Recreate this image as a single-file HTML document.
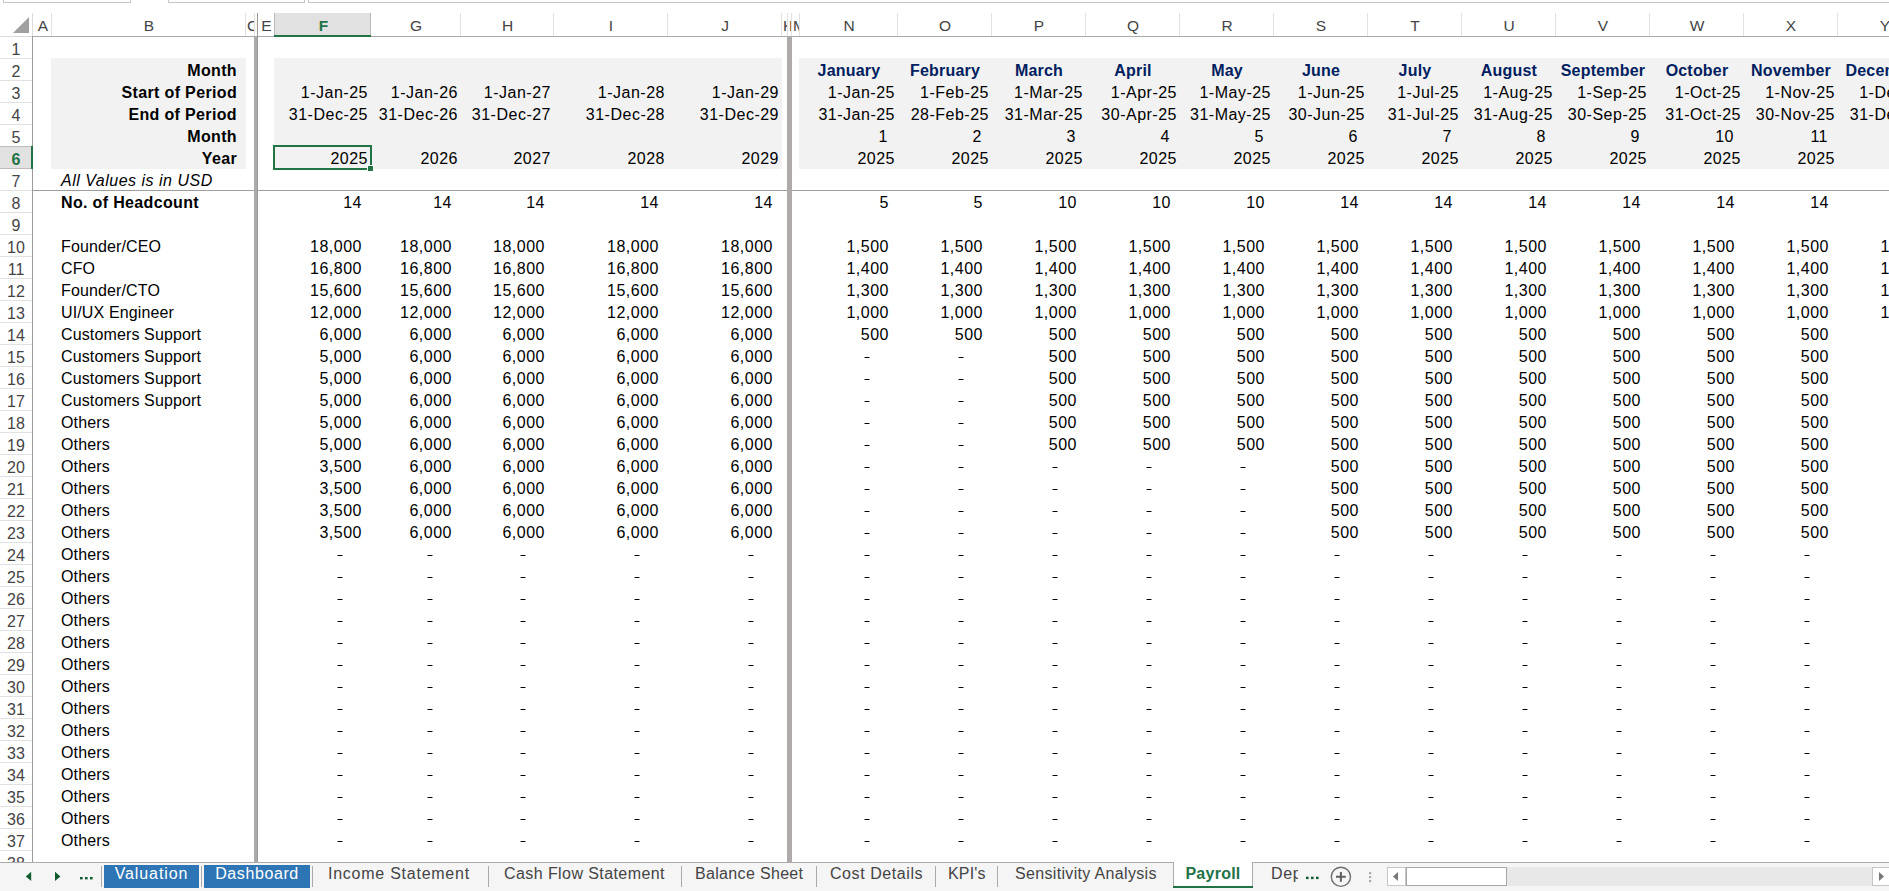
<!DOCTYPE html>
<html><head><meta charset="utf-8">
<style>
*{margin:0;padding:0;box-sizing:border-box}
html,body{width:1889px;height:891px;overflow:hidden;background:#fff}
#root{position:relative;width:1889px;height:891px;overflow:hidden;background:#fff;font-family:"Liberation Sans",sans-serif}
.abs{position:absolute}
.c{position:absolute;height:22px;line-height:22px;font-size:16px;color:#000;white-space:nowrap;letter-spacing:0.5px}
.b{font-weight:bold;letter-spacing:0.35px}
.i{font-style:italic}
.lab{letter-spacing:0.13px}
.navy{color:#002060;letter-spacing:0.2px}
.hl{position:absolute;top:13px;height:23px;line-height:26px;font-size:15.5px;color:#444;text-align:center;overflow:hidden;white-space:nowrap;padding-left:2px}
.hl.sel{background:#e1e1e1;color:#217346;font-weight:bold;border-left:1px solid #bababa;border-right:1px solid #bababa;height:22px}
.hs{position:absolute;top:13px;height:23px;width:1px;background:#e1e1e1}
.rn{position:absolute;left:0;width:32px;height:22px;line-height:26px;font-size:16px;color:#444;text-align:center}
.rn.sel{color:#217346;font-weight:bold}
.rs{position:absolute;left:0;width:32px;height:1px;background:#e1e1e1}
.band{position:absolute;background:#f2f2f2}
.tab{position:absolute;top:862px;height:23px;line-height:24px;font-size:16px;color:#444;white-space:nowrap;letter-spacing:0.6px;font-family:"Liberation Sans",sans-serif}
.tsep{position:absolute;top:866px;height:21px;width:1px;background:#ababab}
</style></head><body><div id="root">
<!-- top formula bar remnants -->
<div class="abs" style="left:3px;top:0;width:128px;height:3px;border:1px solid #c6c6c6;border-top:none"></div>
<div class="abs" style="left:168px;top:0;width:137px;height:3px;border:1px solid #c6c6c6;border-top:none"></div>
<div class="abs" style="left:308px;top:0;width:1600px;height:3px;border:1px solid #c6c6c6;border-top:none"></div>

<!-- column header -->
<div class="hl" style="left:33px;width:18px">A</div>
<div class="hl" style="left:51px;width:194px">B</div>
<div class="hl" style="left:245px;width:9px">C</div>
<div class="hl" style="left:257px;width:17px">E</div>
<div class="hl sel" style="left:274px;width:97px">F</div>
<div class="hl" style="left:370px;width:90px">G</div>
<div class="hl" style="left:460px;width:93px">H</div>
<div class="hl" style="left:553px;width:114px">I</div>
<div class="hl" style="left:667px;width:114px">J</div>
<div class="hl" style="left:781px;width:6px">K</div>
<div class="hl" style="left:787px;width:4px">L</div>
<div class="hl" style="left:791px;width:8px">M</div>
<div class="hl" style="left:799px;width:98px">N</div>
<div class="hl" style="left:897px;width:94px">O</div>
<div class="hl" style="left:991px;width:94px">P</div>
<div class="hl" style="left:1085px;width:94px">Q</div>
<div class="hl" style="left:1179px;width:94px">R</div>
<div class="hl" style="left:1273px;width:94px">S</div>
<div class="hl" style="left:1367px;width:94px">T</div>
<div class="hl" style="left:1461px;width:94px">U</div>
<div class="hl" style="left:1555px;width:94px">V</div>
<div class="hl" style="left:1649px;width:94px">W</div>
<div class="hl" style="left:1743px;width:94px">X</div>
<div class="hl" style="left:1837px;width:94px">Y</div>
<div class="hl" style="left:254px;width:3px">D</div>
<div class="hs" style="left:51px"></div>
<div class="hs" style="left:245px"></div>
<div class="hs" style="left:254px"></div>
<div class="hs" style="left:257px"></div>
<div class="hs" style="left:460px"></div>
<div class="hs" style="left:553px"></div>
<div class="hs" style="left:667px"></div>
<div class="hs" style="left:781px"></div>
<div class="hs" style="left:787px"></div>
<div class="hs" style="left:791px"></div>
<div class="hs" style="left:799px"></div>
<div class="hs" style="left:897px"></div>
<div class="hs" style="left:991px"></div>
<div class="hs" style="left:1085px"></div>
<div class="hs" style="left:1179px"></div>
<div class="hs" style="left:1273px"></div>
<div class="hs" style="left:1367px"></div>
<div class="hs" style="left:1461px"></div>
<div class="hs" style="left:1555px"></div>
<div class="hs" style="left:1649px"></div>
<div class="hs" style="left:1743px"></div>
<div class="hs" style="left:1837px"></div>
<div class="hs" style="left:1931px"></div>
<div class="abs" style="left:0;top:36px;width:33px;height:1px;background:#dadada"></div>
<div class="abs" style="left:33px;top:36px;width:1856px;height:1px;background:#ababab"></div>
<div class="abs" style="left:274px;top:35px;width:97px;height:2px;background:#217346"></div>
<!-- select-all triangle -->
<svg class="abs" style="left:13px;top:17px" width="17" height="17" viewBox="0 0 17 17"><path d="M16 0 L16 16 L0 16 Z" fill="#a0a0a0"/></svg>

<!-- row header -->
<div class="abs" style="left:0;top:146px;width:31px;height:23px;background:#e1e1e1;border-top:1px solid #bdbdbd;border-bottom:1px solid #bdbdbd"></div>
<div class="rn" style="top:37px">1</div>
<div class="rs" style="top:58px"></div>
<div class="rn" style="top:59px">2</div>
<div class="rs" style="top:80px"></div>
<div class="rn" style="top:81px">3</div>
<div class="rs" style="top:102px"></div>
<div class="rn" style="top:103px">4</div>
<div class="rs" style="top:124px"></div>
<div class="rn" style="top:125px">5</div>
<div class="rn sel" style="top:147px">6</div>
<div class="rn" style="top:169px">7</div>
<div class="rs" style="top:190px"></div>
<div class="rn" style="top:191px">8</div>
<div class="rs" style="top:212px"></div>
<div class="rn" style="top:213px">9</div>
<div class="rs" style="top:234px"></div>
<div class="rn" style="top:235px">10</div>
<div class="rs" style="top:256px"></div>
<div class="rn" style="top:257px">11</div>
<div class="rs" style="top:278px"></div>
<div class="rn" style="top:279px">12</div>
<div class="rs" style="top:300px"></div>
<div class="rn" style="top:301px">13</div>
<div class="rs" style="top:322px"></div>
<div class="rn" style="top:323px">14</div>
<div class="rs" style="top:344px"></div>
<div class="rn" style="top:345px">15</div>
<div class="rs" style="top:366px"></div>
<div class="rn" style="top:367px">16</div>
<div class="rs" style="top:388px"></div>
<div class="rn" style="top:389px">17</div>
<div class="rs" style="top:410px"></div>
<div class="rn" style="top:411px">18</div>
<div class="rs" style="top:432px"></div>
<div class="rn" style="top:433px">19</div>
<div class="rs" style="top:454px"></div>
<div class="rn" style="top:455px">20</div>
<div class="rs" style="top:476px"></div>
<div class="rn" style="top:477px">21</div>
<div class="rs" style="top:498px"></div>
<div class="rn" style="top:499px">22</div>
<div class="rs" style="top:520px"></div>
<div class="rn" style="top:521px">23</div>
<div class="rs" style="top:542px"></div>
<div class="rn" style="top:543px">24</div>
<div class="rs" style="top:564px"></div>
<div class="rn" style="top:565px">25</div>
<div class="rs" style="top:586px"></div>
<div class="rn" style="top:587px">26</div>
<div class="rs" style="top:608px"></div>
<div class="rn" style="top:609px">27</div>
<div class="rs" style="top:630px"></div>
<div class="rn" style="top:631px">28</div>
<div class="rs" style="top:652px"></div>
<div class="rn" style="top:653px">29</div>
<div class="rs" style="top:674px"></div>
<div class="rn" style="top:675px">30</div>
<div class="rs" style="top:696px"></div>
<div class="rn" style="top:697px">31</div>
<div class="rs" style="top:718px"></div>
<div class="rn" style="top:719px">32</div>
<div class="rs" style="top:740px"></div>
<div class="rn" style="top:741px">33</div>
<div class="rs" style="top:762px"></div>
<div class="rn" style="top:763px">34</div>
<div class="rs" style="top:784px"></div>
<div class="rn" style="top:785px">35</div>
<div class="rs" style="top:806px"></div>
<div class="rn" style="top:807px">36</div>
<div class="rs" style="top:828px"></div>
<div class="rn" style="top:829px">37</div>
<div class="rs" style="top:850px"></div>
<div class="rn" style="top:851px">38</div>
<div class="rs" style="top:872px"></div>
<div class="abs" style="left:32px;top:13px;width:1px;height:23px;background:#dadada"></div><div class="abs" style="left:32px;top:36px;width:1px;height:826px;background:#9b9b9b"></div>
<div class="abs" style="left:31px;top:146px;width:2px;height:23px;background:#217346"></div>

<!-- gray bands -->
<div class="band" style="left:51px;top:58px;width:195px;height:111px"></div>
<div class="band" style="left:274px;top:58px;width:508px;height:111px"></div>
<div class="band" style="left:799px;top:58px;width:1090px;height:111px"></div>

<!-- row 7 border -->
<div class="abs" style="left:33px;top:190px;width:1856px;height:1px;background:#9e9e9e"></div>

<!-- gray narrow columns -->
<div class="abs" style="left:254px;top:37px;width:3px;height:825px;background:#aeaaaa"></div>
<div class="abs" style="left:257px;top:13px;width:1px;height:849px;background:#999"></div>
<div class="abs" style="left:787px;top:37px;width:5px;height:825px;background:#aeaaaa"></div>

<!-- selection -->
<div class="abs" style="left:273px;top:145px;width:99px;height:25px;border:2px solid #217346"></div>
<div class="abs" style="left:367px;top:165px;width:7px;height:7px;background:#217346;border:1px solid #fff"></div>

<!-- cells -->
<div class="c b" style="left:51px;width:186px;text-align:right;top:60px;">Month</div>
<div class="c b" style="left:51px;width:186px;text-align:right;top:82px;">Start of Period</div>
<div class="c b" style="left:51px;width:186px;text-align:right;top:104px;">End of Period</div>
<div class="c b" style="left:51px;width:186px;text-align:right;top:126px;">Month</div>
<div class="c b" style="left:51px;width:186px;text-align:right;top:148px;">Year</div>
<div class="c i" style="left:61px;text-align:left;top:170px;">All Values is in USD</div>
<div class="c b" style="left:61px;text-align:left;top:192px;">No. of Headcount</div>
<div class="c lab" style="left:61px;text-align:left;top:236px;">Founder/CEO</div>
<div class="c lab" style="left:61px;text-align:left;top:258px;">CFO</div>
<div class="c lab" style="left:61px;text-align:left;top:280px;">Founder/CTO</div>
<div class="c lab" style="left:61px;text-align:left;top:302px;">UI/UX Engineer</div>
<div class="c lab" style="left:61px;text-align:left;top:324px;">Customers Support</div>
<div class="c lab" style="left:61px;text-align:left;top:346px;">Customers Support</div>
<div class="c lab" style="left:61px;text-align:left;top:368px;">Customers Support</div>
<div class="c lab" style="left:61px;text-align:left;top:390px;">Customers Support</div>
<div class="c lab" style="left:61px;text-align:left;top:412px;">Others</div>
<div class="c lab" style="left:61px;text-align:left;top:434px;">Others</div>
<div class="c lab" style="left:61px;text-align:left;top:456px;">Others</div>
<div class="c lab" style="left:61px;text-align:left;top:478px;">Others</div>
<div class="c lab" style="left:61px;text-align:left;top:500px;">Others</div>
<div class="c lab" style="left:61px;text-align:left;top:522px;">Others</div>
<div class="c lab" style="left:61px;text-align:left;top:544px;">Others</div>
<div class="c lab" style="left:61px;text-align:left;top:566px;">Others</div>
<div class="c lab" style="left:61px;text-align:left;top:588px;">Others</div>
<div class="c lab" style="left:61px;text-align:left;top:610px;">Others</div>
<div class="c lab" style="left:61px;text-align:left;top:632px;">Others</div>
<div class="c lab" style="left:61px;text-align:left;top:654px;">Others</div>
<div class="c lab" style="left:61px;text-align:left;top:676px;">Others</div>
<div class="c lab" style="left:61px;text-align:left;top:698px;">Others</div>
<div class="c lab" style="left:61px;text-align:left;top:720px;">Others</div>
<div class="c lab" style="left:61px;text-align:left;top:742px;">Others</div>
<div class="c lab" style="left:61px;text-align:left;top:764px;">Others</div>
<div class="c lab" style="left:61px;text-align:left;top:786px;">Others</div>
<div class="c lab" style="left:61px;text-align:left;top:808px;">Others</div>
<div class="c lab" style="left:61px;text-align:left;top:830px;">Others</div>
<div class="c " style="left:274px;width:94px;text-align:right;top:82px;">1-Jan-25</div>
<div class="c " style="left:274px;width:94px;text-align:right;top:104px;">31-Dec-25</div>
<div class="c " style="left:274px;width:94px;text-align:right;top:148px;">2025</div>
<div class="c " style="left:274px;width:88px;text-align:right;top:192px;">14</div>
<div class="c " style="left:370px;width:88px;text-align:right;top:82px;">1-Jan-26</div>
<div class="c " style="left:370px;width:88px;text-align:right;top:104px;">31-Dec-26</div>
<div class="c " style="left:370px;width:88px;text-align:right;top:148px;">2026</div>
<div class="c " style="left:370px;width:82px;text-align:right;top:192px;">14</div>
<div class="c " style="left:460px;width:91px;text-align:right;top:82px;">1-Jan-27</div>
<div class="c " style="left:460px;width:91px;text-align:right;top:104px;">31-Dec-27</div>
<div class="c " style="left:460px;width:91px;text-align:right;top:148px;">2027</div>
<div class="c " style="left:460px;width:85px;text-align:right;top:192px;">14</div>
<div class="c " style="left:553px;width:112px;text-align:right;top:82px;">1-Jan-28</div>
<div class="c " style="left:553px;width:112px;text-align:right;top:104px;">31-Dec-28</div>
<div class="c " style="left:553px;width:112px;text-align:right;top:148px;">2028</div>
<div class="c " style="left:553px;width:106px;text-align:right;top:192px;">14</div>
<div class="c " style="left:667px;width:112px;text-align:right;top:82px;">1-Jan-29</div>
<div class="c " style="left:667px;width:112px;text-align:right;top:104px;">31-Dec-29</div>
<div class="c " style="left:667px;width:112px;text-align:right;top:148px;">2029</div>
<div class="c " style="left:667px;width:106px;text-align:right;top:192px;">14</div>
<div class="c b navy" style="left:800px;width:98px;text-align:center;top:60px;">January</div>
<div class="c " style="left:799px;width:96px;text-align:right;top:82px;">1-Jan-25</div>
<div class="c " style="left:799px;width:96px;text-align:right;top:104px;">31-Jan-25</div>
<div class="c " style="left:799px;width:89px;text-align:right;top:126px;">1</div>
<div class="c " style="left:799px;width:96px;text-align:right;top:148px;">2025</div>
<div class="c b navy" style="left:898px;width:94px;text-align:center;top:60px;">February</div>
<div class="c " style="left:897px;width:92px;text-align:right;top:82px;">1-Feb-25</div>
<div class="c " style="left:897px;width:92px;text-align:right;top:104px;">28-Feb-25</div>
<div class="c " style="left:897px;width:85px;text-align:right;top:126px;">2</div>
<div class="c " style="left:897px;width:92px;text-align:right;top:148px;">2025</div>
<div class="c b navy" style="left:992px;width:94px;text-align:center;top:60px;">March</div>
<div class="c " style="left:991px;width:92px;text-align:right;top:82px;">1-Mar-25</div>
<div class="c " style="left:991px;width:92px;text-align:right;top:104px;">31-Mar-25</div>
<div class="c " style="left:991px;width:85px;text-align:right;top:126px;">3</div>
<div class="c " style="left:991px;width:92px;text-align:right;top:148px;">2025</div>
<div class="c b navy" style="left:1086px;width:94px;text-align:center;top:60px;">April</div>
<div class="c " style="left:1085px;width:92px;text-align:right;top:82px;">1-Apr-25</div>
<div class="c " style="left:1085px;width:92px;text-align:right;top:104px;">30-Apr-25</div>
<div class="c " style="left:1085px;width:85px;text-align:right;top:126px;">4</div>
<div class="c " style="left:1085px;width:92px;text-align:right;top:148px;">2025</div>
<div class="c b navy" style="left:1180px;width:94px;text-align:center;top:60px;">May</div>
<div class="c " style="left:1179px;width:92px;text-align:right;top:82px;">1-May-25</div>
<div class="c " style="left:1179px;width:92px;text-align:right;top:104px;">31-May-25</div>
<div class="c " style="left:1179px;width:85px;text-align:right;top:126px;">5</div>
<div class="c " style="left:1179px;width:92px;text-align:right;top:148px;">2025</div>
<div class="c b navy" style="left:1274px;width:94px;text-align:center;top:60px;">June</div>
<div class="c " style="left:1273px;width:92px;text-align:right;top:82px;">1-Jun-25</div>
<div class="c " style="left:1273px;width:92px;text-align:right;top:104px;">30-Jun-25</div>
<div class="c " style="left:1273px;width:85px;text-align:right;top:126px;">6</div>
<div class="c " style="left:1273px;width:92px;text-align:right;top:148px;">2025</div>
<div class="c b navy" style="left:1368px;width:94px;text-align:center;top:60px;">July</div>
<div class="c " style="left:1367px;width:92px;text-align:right;top:82px;">1-Jul-25</div>
<div class="c " style="left:1367px;width:92px;text-align:right;top:104px;">31-Jul-25</div>
<div class="c " style="left:1367px;width:85px;text-align:right;top:126px;">7</div>
<div class="c " style="left:1367px;width:92px;text-align:right;top:148px;">2025</div>
<div class="c b navy" style="left:1462px;width:94px;text-align:center;top:60px;">August</div>
<div class="c " style="left:1461px;width:92px;text-align:right;top:82px;">1-Aug-25</div>
<div class="c " style="left:1461px;width:92px;text-align:right;top:104px;">31-Aug-25</div>
<div class="c " style="left:1461px;width:85px;text-align:right;top:126px;">8</div>
<div class="c " style="left:1461px;width:92px;text-align:right;top:148px;">2025</div>
<div class="c b navy" style="left:1556px;width:94px;text-align:center;top:60px;">September</div>
<div class="c " style="left:1555px;width:92px;text-align:right;top:82px;">1-Sep-25</div>
<div class="c " style="left:1555px;width:92px;text-align:right;top:104px;">30-Sep-25</div>
<div class="c " style="left:1555px;width:85px;text-align:right;top:126px;">9</div>
<div class="c " style="left:1555px;width:92px;text-align:right;top:148px;">2025</div>
<div class="c b navy" style="left:1650px;width:94px;text-align:center;top:60px;">October</div>
<div class="c " style="left:1649px;width:92px;text-align:right;top:82px;">1-Oct-25</div>
<div class="c " style="left:1649px;width:92px;text-align:right;top:104px;">31-Oct-25</div>
<div class="c " style="left:1649px;width:85px;text-align:right;top:126px;">10</div>
<div class="c " style="left:1649px;width:92px;text-align:right;top:148px;">2025</div>
<div class="c b navy" style="left:1744px;width:94px;text-align:center;top:60px;">November</div>
<div class="c " style="left:1743px;width:92px;text-align:right;top:82px;">1-Nov-25</div>
<div class="c " style="left:1743px;width:92px;text-align:right;top:104px;">30-Nov-25</div>
<div class="c " style="left:1743px;width:85px;text-align:right;top:126px;">11</div>
<div class="c " style="left:1743px;width:92px;text-align:right;top:148px;">2025</div>
<div class="c b navy" style="left:1838px;width:94px;text-align:center;top:60px;">December</div>
<div class="c " style="left:1837px;width:92px;text-align:right;top:82px;">1-Dec-25</div>
<div class="c " style="left:1837px;width:92px;text-align:right;top:104px;">31-Dec-25</div>
<div class="c " style="left:1837px;width:85px;text-align:right;top:126px;">12</div>
<div class="c " style="left:1837px;width:92px;text-align:right;top:148px;">2025</div>
<div class="c " style="left:799px;width:90px;text-align:right;top:192px;">5</div>
<div class="c " style="left:897px;width:86px;text-align:right;top:192px;">5</div>
<div class="c " style="left:991px;width:86px;text-align:right;top:192px;">10</div>
<div class="c " style="left:1085px;width:86px;text-align:right;top:192px;">10</div>
<div class="c " style="left:1179px;width:86px;text-align:right;top:192px;">10</div>
<div class="c " style="left:1273px;width:86px;text-align:right;top:192px;">14</div>
<div class="c " style="left:1367px;width:86px;text-align:right;top:192px;">14</div>
<div class="c " style="left:1461px;width:86px;text-align:right;top:192px;">14</div>
<div class="c " style="left:1555px;width:86px;text-align:right;top:192px;">14</div>
<div class="c " style="left:1649px;width:86px;text-align:right;top:192px;">14</div>
<div class="c " style="left:1743px;width:86px;text-align:right;top:192px;">14</div>
<div class="c " style="left:1837px;width:86px;text-align:right;top:192px;">14</div>
<div class="c " style="left:274px;width:88px;text-align:right;top:236px;">18,000</div>
<div class="c " style="left:370px;width:82px;text-align:right;top:236px;">18,000</div>
<div class="c " style="left:460px;width:85px;text-align:right;top:236px;">18,000</div>
<div class="c " style="left:553px;width:106px;text-align:right;top:236px;">18,000</div>
<div class="c " style="left:667px;width:106px;text-align:right;top:236px;">18,000</div>
<div class="c " style="left:274px;width:88px;text-align:right;top:258px;">16,800</div>
<div class="c " style="left:370px;width:82px;text-align:right;top:258px;">16,800</div>
<div class="c " style="left:460px;width:85px;text-align:right;top:258px;">16,800</div>
<div class="c " style="left:553px;width:106px;text-align:right;top:258px;">16,800</div>
<div class="c " style="left:667px;width:106px;text-align:right;top:258px;">16,800</div>
<div class="c " style="left:274px;width:88px;text-align:right;top:280px;">15,600</div>
<div class="c " style="left:370px;width:82px;text-align:right;top:280px;">15,600</div>
<div class="c " style="left:460px;width:85px;text-align:right;top:280px;">15,600</div>
<div class="c " style="left:553px;width:106px;text-align:right;top:280px;">15,600</div>
<div class="c " style="left:667px;width:106px;text-align:right;top:280px;">15,600</div>
<div class="c " style="left:274px;width:88px;text-align:right;top:302px;">12,000</div>
<div class="c " style="left:370px;width:82px;text-align:right;top:302px;">12,000</div>
<div class="c " style="left:460px;width:85px;text-align:right;top:302px;">12,000</div>
<div class="c " style="left:553px;width:106px;text-align:right;top:302px;">12,000</div>
<div class="c " style="left:667px;width:106px;text-align:right;top:302px;">12,000</div>
<div class="c " style="left:274px;width:88px;text-align:right;top:324px;">6,000</div>
<div class="c " style="left:370px;width:82px;text-align:right;top:324px;">6,000</div>
<div class="c " style="left:460px;width:85px;text-align:right;top:324px;">6,000</div>
<div class="c " style="left:553px;width:106px;text-align:right;top:324px;">6,000</div>
<div class="c " style="left:667px;width:106px;text-align:right;top:324px;">6,000</div>
<div class="c " style="left:274px;width:88px;text-align:right;top:346px;">5,000</div>
<div class="c " style="left:370px;width:82px;text-align:right;top:346px;">6,000</div>
<div class="c " style="left:460px;width:85px;text-align:right;top:346px;">6,000</div>
<div class="c " style="left:553px;width:106px;text-align:right;top:346px;">6,000</div>
<div class="c " style="left:667px;width:106px;text-align:right;top:346px;">6,000</div>
<div class="c " style="left:274px;width:88px;text-align:right;top:368px;">5,000</div>
<div class="c " style="left:370px;width:82px;text-align:right;top:368px;">6,000</div>
<div class="c " style="left:460px;width:85px;text-align:right;top:368px;">6,000</div>
<div class="c " style="left:553px;width:106px;text-align:right;top:368px;">6,000</div>
<div class="c " style="left:667px;width:106px;text-align:right;top:368px;">6,000</div>
<div class="c " style="left:274px;width:88px;text-align:right;top:390px;">5,000</div>
<div class="c " style="left:370px;width:82px;text-align:right;top:390px;">6,000</div>
<div class="c " style="left:460px;width:85px;text-align:right;top:390px;">6,000</div>
<div class="c " style="left:553px;width:106px;text-align:right;top:390px;">6,000</div>
<div class="c " style="left:667px;width:106px;text-align:right;top:390px;">6,000</div>
<div class="c " style="left:274px;width:88px;text-align:right;top:412px;">5,000</div>
<div class="c " style="left:370px;width:82px;text-align:right;top:412px;">6,000</div>
<div class="c " style="left:460px;width:85px;text-align:right;top:412px;">6,000</div>
<div class="c " style="left:553px;width:106px;text-align:right;top:412px;">6,000</div>
<div class="c " style="left:667px;width:106px;text-align:right;top:412px;">6,000</div>
<div class="c " style="left:274px;width:88px;text-align:right;top:434px;">5,000</div>
<div class="c " style="left:370px;width:82px;text-align:right;top:434px;">6,000</div>
<div class="c " style="left:460px;width:85px;text-align:right;top:434px;">6,000</div>
<div class="c " style="left:553px;width:106px;text-align:right;top:434px;">6,000</div>
<div class="c " style="left:667px;width:106px;text-align:right;top:434px;">6,000</div>
<div class="c " style="left:274px;width:88px;text-align:right;top:456px;">3,500</div>
<div class="c " style="left:370px;width:82px;text-align:right;top:456px;">6,000</div>
<div class="c " style="left:460px;width:85px;text-align:right;top:456px;">6,000</div>
<div class="c " style="left:553px;width:106px;text-align:right;top:456px;">6,000</div>
<div class="c " style="left:667px;width:106px;text-align:right;top:456px;">6,000</div>
<div class="c " style="left:274px;width:88px;text-align:right;top:478px;">3,500</div>
<div class="c " style="left:370px;width:82px;text-align:right;top:478px;">6,000</div>
<div class="c " style="left:460px;width:85px;text-align:right;top:478px;">6,000</div>
<div class="c " style="left:553px;width:106px;text-align:right;top:478px;">6,000</div>
<div class="c " style="left:667px;width:106px;text-align:right;top:478px;">6,000</div>
<div class="c " style="left:274px;width:88px;text-align:right;top:500px;">3,500</div>
<div class="c " style="left:370px;width:82px;text-align:right;top:500px;">6,000</div>
<div class="c " style="left:460px;width:85px;text-align:right;top:500px;">6,000</div>
<div class="c " style="left:553px;width:106px;text-align:right;top:500px;">6,000</div>
<div class="c " style="left:667px;width:106px;text-align:right;top:500px;">6,000</div>
<div class="c " style="left:274px;width:88px;text-align:right;top:522px;">3,500</div>
<div class="c " style="left:370px;width:82px;text-align:right;top:522px;">6,000</div>
<div class="c " style="left:460px;width:85px;text-align:right;top:522px;">6,000</div>
<div class="c " style="left:553px;width:106px;text-align:right;top:522px;">6,000</div>
<div class="c " style="left:667px;width:106px;text-align:right;top:522px;">6,000</div>
<div class="abs" style="left:337px;top:555px;width:6px;height:1px;background:linear-gradient(to right,#8a8a8a 0 1px,#000 1px 5px,#8a8a8a 5px 6px)"></div>
<div class="abs" style="left:427px;top:555px;width:6px;height:1px;background:linear-gradient(to right,#8a8a8a 0 1px,#000 1px 5px,#8a8a8a 5px 6px)"></div>
<div class="abs" style="left:520px;top:555px;width:6px;height:1px;background:linear-gradient(to right,#8a8a8a 0 1px,#000 1px 5px,#8a8a8a 5px 6px)"></div>
<div class="abs" style="left:634px;top:555px;width:6px;height:1px;background:linear-gradient(to right,#8a8a8a 0 1px,#000 1px 5px,#8a8a8a 5px 6px)"></div>
<div class="abs" style="left:748px;top:555px;width:6px;height:1px;background:linear-gradient(to right,#8a8a8a 0 1px,#000 1px 5px,#8a8a8a 5px 6px)"></div>
<div class="abs" style="left:337px;top:577px;width:6px;height:1px;background:linear-gradient(to right,#8a8a8a 0 1px,#000 1px 5px,#8a8a8a 5px 6px)"></div>
<div class="abs" style="left:427px;top:577px;width:6px;height:1px;background:linear-gradient(to right,#8a8a8a 0 1px,#000 1px 5px,#8a8a8a 5px 6px)"></div>
<div class="abs" style="left:520px;top:577px;width:6px;height:1px;background:linear-gradient(to right,#8a8a8a 0 1px,#000 1px 5px,#8a8a8a 5px 6px)"></div>
<div class="abs" style="left:634px;top:577px;width:6px;height:1px;background:linear-gradient(to right,#8a8a8a 0 1px,#000 1px 5px,#8a8a8a 5px 6px)"></div>
<div class="abs" style="left:748px;top:577px;width:6px;height:1px;background:linear-gradient(to right,#8a8a8a 0 1px,#000 1px 5px,#8a8a8a 5px 6px)"></div>
<div class="abs" style="left:337px;top:599px;width:6px;height:1px;background:linear-gradient(to right,#8a8a8a 0 1px,#000 1px 5px,#8a8a8a 5px 6px)"></div>
<div class="abs" style="left:427px;top:599px;width:6px;height:1px;background:linear-gradient(to right,#8a8a8a 0 1px,#000 1px 5px,#8a8a8a 5px 6px)"></div>
<div class="abs" style="left:520px;top:599px;width:6px;height:1px;background:linear-gradient(to right,#8a8a8a 0 1px,#000 1px 5px,#8a8a8a 5px 6px)"></div>
<div class="abs" style="left:634px;top:599px;width:6px;height:1px;background:linear-gradient(to right,#8a8a8a 0 1px,#000 1px 5px,#8a8a8a 5px 6px)"></div>
<div class="abs" style="left:748px;top:599px;width:6px;height:1px;background:linear-gradient(to right,#8a8a8a 0 1px,#000 1px 5px,#8a8a8a 5px 6px)"></div>
<div class="abs" style="left:337px;top:621px;width:6px;height:1px;background:linear-gradient(to right,#8a8a8a 0 1px,#000 1px 5px,#8a8a8a 5px 6px)"></div>
<div class="abs" style="left:427px;top:621px;width:6px;height:1px;background:linear-gradient(to right,#8a8a8a 0 1px,#000 1px 5px,#8a8a8a 5px 6px)"></div>
<div class="abs" style="left:520px;top:621px;width:6px;height:1px;background:linear-gradient(to right,#8a8a8a 0 1px,#000 1px 5px,#8a8a8a 5px 6px)"></div>
<div class="abs" style="left:634px;top:621px;width:6px;height:1px;background:linear-gradient(to right,#8a8a8a 0 1px,#000 1px 5px,#8a8a8a 5px 6px)"></div>
<div class="abs" style="left:748px;top:621px;width:6px;height:1px;background:linear-gradient(to right,#8a8a8a 0 1px,#000 1px 5px,#8a8a8a 5px 6px)"></div>
<div class="abs" style="left:337px;top:643px;width:6px;height:1px;background:linear-gradient(to right,#8a8a8a 0 1px,#000 1px 5px,#8a8a8a 5px 6px)"></div>
<div class="abs" style="left:427px;top:643px;width:6px;height:1px;background:linear-gradient(to right,#8a8a8a 0 1px,#000 1px 5px,#8a8a8a 5px 6px)"></div>
<div class="abs" style="left:520px;top:643px;width:6px;height:1px;background:linear-gradient(to right,#8a8a8a 0 1px,#000 1px 5px,#8a8a8a 5px 6px)"></div>
<div class="abs" style="left:634px;top:643px;width:6px;height:1px;background:linear-gradient(to right,#8a8a8a 0 1px,#000 1px 5px,#8a8a8a 5px 6px)"></div>
<div class="abs" style="left:748px;top:643px;width:6px;height:1px;background:linear-gradient(to right,#8a8a8a 0 1px,#000 1px 5px,#8a8a8a 5px 6px)"></div>
<div class="abs" style="left:337px;top:665px;width:6px;height:1px;background:linear-gradient(to right,#8a8a8a 0 1px,#000 1px 5px,#8a8a8a 5px 6px)"></div>
<div class="abs" style="left:427px;top:665px;width:6px;height:1px;background:linear-gradient(to right,#8a8a8a 0 1px,#000 1px 5px,#8a8a8a 5px 6px)"></div>
<div class="abs" style="left:520px;top:665px;width:6px;height:1px;background:linear-gradient(to right,#8a8a8a 0 1px,#000 1px 5px,#8a8a8a 5px 6px)"></div>
<div class="abs" style="left:634px;top:665px;width:6px;height:1px;background:linear-gradient(to right,#8a8a8a 0 1px,#000 1px 5px,#8a8a8a 5px 6px)"></div>
<div class="abs" style="left:748px;top:665px;width:6px;height:1px;background:linear-gradient(to right,#8a8a8a 0 1px,#000 1px 5px,#8a8a8a 5px 6px)"></div>
<div class="abs" style="left:337px;top:687px;width:6px;height:1px;background:linear-gradient(to right,#8a8a8a 0 1px,#000 1px 5px,#8a8a8a 5px 6px)"></div>
<div class="abs" style="left:427px;top:687px;width:6px;height:1px;background:linear-gradient(to right,#8a8a8a 0 1px,#000 1px 5px,#8a8a8a 5px 6px)"></div>
<div class="abs" style="left:520px;top:687px;width:6px;height:1px;background:linear-gradient(to right,#8a8a8a 0 1px,#000 1px 5px,#8a8a8a 5px 6px)"></div>
<div class="abs" style="left:634px;top:687px;width:6px;height:1px;background:linear-gradient(to right,#8a8a8a 0 1px,#000 1px 5px,#8a8a8a 5px 6px)"></div>
<div class="abs" style="left:748px;top:687px;width:6px;height:1px;background:linear-gradient(to right,#8a8a8a 0 1px,#000 1px 5px,#8a8a8a 5px 6px)"></div>
<div class="abs" style="left:337px;top:709px;width:6px;height:1px;background:linear-gradient(to right,#8a8a8a 0 1px,#000 1px 5px,#8a8a8a 5px 6px)"></div>
<div class="abs" style="left:427px;top:709px;width:6px;height:1px;background:linear-gradient(to right,#8a8a8a 0 1px,#000 1px 5px,#8a8a8a 5px 6px)"></div>
<div class="abs" style="left:520px;top:709px;width:6px;height:1px;background:linear-gradient(to right,#8a8a8a 0 1px,#000 1px 5px,#8a8a8a 5px 6px)"></div>
<div class="abs" style="left:634px;top:709px;width:6px;height:1px;background:linear-gradient(to right,#8a8a8a 0 1px,#000 1px 5px,#8a8a8a 5px 6px)"></div>
<div class="abs" style="left:748px;top:709px;width:6px;height:1px;background:linear-gradient(to right,#8a8a8a 0 1px,#000 1px 5px,#8a8a8a 5px 6px)"></div>
<div class="abs" style="left:337px;top:731px;width:6px;height:1px;background:linear-gradient(to right,#8a8a8a 0 1px,#000 1px 5px,#8a8a8a 5px 6px)"></div>
<div class="abs" style="left:427px;top:731px;width:6px;height:1px;background:linear-gradient(to right,#8a8a8a 0 1px,#000 1px 5px,#8a8a8a 5px 6px)"></div>
<div class="abs" style="left:520px;top:731px;width:6px;height:1px;background:linear-gradient(to right,#8a8a8a 0 1px,#000 1px 5px,#8a8a8a 5px 6px)"></div>
<div class="abs" style="left:634px;top:731px;width:6px;height:1px;background:linear-gradient(to right,#8a8a8a 0 1px,#000 1px 5px,#8a8a8a 5px 6px)"></div>
<div class="abs" style="left:748px;top:731px;width:6px;height:1px;background:linear-gradient(to right,#8a8a8a 0 1px,#000 1px 5px,#8a8a8a 5px 6px)"></div>
<div class="abs" style="left:337px;top:753px;width:6px;height:1px;background:linear-gradient(to right,#8a8a8a 0 1px,#000 1px 5px,#8a8a8a 5px 6px)"></div>
<div class="abs" style="left:427px;top:753px;width:6px;height:1px;background:linear-gradient(to right,#8a8a8a 0 1px,#000 1px 5px,#8a8a8a 5px 6px)"></div>
<div class="abs" style="left:520px;top:753px;width:6px;height:1px;background:linear-gradient(to right,#8a8a8a 0 1px,#000 1px 5px,#8a8a8a 5px 6px)"></div>
<div class="abs" style="left:634px;top:753px;width:6px;height:1px;background:linear-gradient(to right,#8a8a8a 0 1px,#000 1px 5px,#8a8a8a 5px 6px)"></div>
<div class="abs" style="left:748px;top:753px;width:6px;height:1px;background:linear-gradient(to right,#8a8a8a 0 1px,#000 1px 5px,#8a8a8a 5px 6px)"></div>
<div class="abs" style="left:337px;top:775px;width:6px;height:1px;background:linear-gradient(to right,#8a8a8a 0 1px,#000 1px 5px,#8a8a8a 5px 6px)"></div>
<div class="abs" style="left:427px;top:775px;width:6px;height:1px;background:linear-gradient(to right,#8a8a8a 0 1px,#000 1px 5px,#8a8a8a 5px 6px)"></div>
<div class="abs" style="left:520px;top:775px;width:6px;height:1px;background:linear-gradient(to right,#8a8a8a 0 1px,#000 1px 5px,#8a8a8a 5px 6px)"></div>
<div class="abs" style="left:634px;top:775px;width:6px;height:1px;background:linear-gradient(to right,#8a8a8a 0 1px,#000 1px 5px,#8a8a8a 5px 6px)"></div>
<div class="abs" style="left:748px;top:775px;width:6px;height:1px;background:linear-gradient(to right,#8a8a8a 0 1px,#000 1px 5px,#8a8a8a 5px 6px)"></div>
<div class="abs" style="left:337px;top:797px;width:6px;height:1px;background:linear-gradient(to right,#8a8a8a 0 1px,#000 1px 5px,#8a8a8a 5px 6px)"></div>
<div class="abs" style="left:427px;top:797px;width:6px;height:1px;background:linear-gradient(to right,#8a8a8a 0 1px,#000 1px 5px,#8a8a8a 5px 6px)"></div>
<div class="abs" style="left:520px;top:797px;width:6px;height:1px;background:linear-gradient(to right,#8a8a8a 0 1px,#000 1px 5px,#8a8a8a 5px 6px)"></div>
<div class="abs" style="left:634px;top:797px;width:6px;height:1px;background:linear-gradient(to right,#8a8a8a 0 1px,#000 1px 5px,#8a8a8a 5px 6px)"></div>
<div class="abs" style="left:748px;top:797px;width:6px;height:1px;background:linear-gradient(to right,#8a8a8a 0 1px,#000 1px 5px,#8a8a8a 5px 6px)"></div>
<div class="abs" style="left:337px;top:819px;width:6px;height:1px;background:linear-gradient(to right,#8a8a8a 0 1px,#000 1px 5px,#8a8a8a 5px 6px)"></div>
<div class="abs" style="left:427px;top:819px;width:6px;height:1px;background:linear-gradient(to right,#8a8a8a 0 1px,#000 1px 5px,#8a8a8a 5px 6px)"></div>
<div class="abs" style="left:520px;top:819px;width:6px;height:1px;background:linear-gradient(to right,#8a8a8a 0 1px,#000 1px 5px,#8a8a8a 5px 6px)"></div>
<div class="abs" style="left:634px;top:819px;width:6px;height:1px;background:linear-gradient(to right,#8a8a8a 0 1px,#000 1px 5px,#8a8a8a 5px 6px)"></div>
<div class="abs" style="left:748px;top:819px;width:6px;height:1px;background:linear-gradient(to right,#8a8a8a 0 1px,#000 1px 5px,#8a8a8a 5px 6px)"></div>
<div class="abs" style="left:337px;top:841px;width:6px;height:1px;background:linear-gradient(to right,#8a8a8a 0 1px,#000 1px 5px,#8a8a8a 5px 6px)"></div>
<div class="abs" style="left:427px;top:841px;width:6px;height:1px;background:linear-gradient(to right,#8a8a8a 0 1px,#000 1px 5px,#8a8a8a 5px 6px)"></div>
<div class="abs" style="left:520px;top:841px;width:6px;height:1px;background:linear-gradient(to right,#8a8a8a 0 1px,#000 1px 5px,#8a8a8a 5px 6px)"></div>
<div class="abs" style="left:634px;top:841px;width:6px;height:1px;background:linear-gradient(to right,#8a8a8a 0 1px,#000 1px 5px,#8a8a8a 5px 6px)"></div>
<div class="abs" style="left:748px;top:841px;width:6px;height:1px;background:linear-gradient(to right,#8a8a8a 0 1px,#000 1px 5px,#8a8a8a 5px 6px)"></div>
<div class="c " style="left:799px;width:90px;text-align:right;top:236px;">1,500</div>
<div class="c " style="left:897px;width:86px;text-align:right;top:236px;">1,500</div>
<div class="c " style="left:991px;width:86px;text-align:right;top:236px;">1,500</div>
<div class="c " style="left:1085px;width:86px;text-align:right;top:236px;">1,500</div>
<div class="c " style="left:1179px;width:86px;text-align:right;top:236px;">1,500</div>
<div class="c " style="left:1273px;width:86px;text-align:right;top:236px;">1,500</div>
<div class="c " style="left:1367px;width:86px;text-align:right;top:236px;">1,500</div>
<div class="c " style="left:1461px;width:86px;text-align:right;top:236px;">1,500</div>
<div class="c " style="left:1555px;width:86px;text-align:right;top:236px;">1,500</div>
<div class="c " style="left:1649px;width:86px;text-align:right;top:236px;">1,500</div>
<div class="c " style="left:1743px;width:86px;text-align:right;top:236px;">1,500</div>
<div class="c " style="left:1837px;width:86px;text-align:right;top:236px;">1,500</div>
<div class="c " style="left:799px;width:90px;text-align:right;top:258px;">1,400</div>
<div class="c " style="left:897px;width:86px;text-align:right;top:258px;">1,400</div>
<div class="c " style="left:991px;width:86px;text-align:right;top:258px;">1,400</div>
<div class="c " style="left:1085px;width:86px;text-align:right;top:258px;">1,400</div>
<div class="c " style="left:1179px;width:86px;text-align:right;top:258px;">1,400</div>
<div class="c " style="left:1273px;width:86px;text-align:right;top:258px;">1,400</div>
<div class="c " style="left:1367px;width:86px;text-align:right;top:258px;">1,400</div>
<div class="c " style="left:1461px;width:86px;text-align:right;top:258px;">1,400</div>
<div class="c " style="left:1555px;width:86px;text-align:right;top:258px;">1,400</div>
<div class="c " style="left:1649px;width:86px;text-align:right;top:258px;">1,400</div>
<div class="c " style="left:1743px;width:86px;text-align:right;top:258px;">1,400</div>
<div class="c " style="left:1837px;width:86px;text-align:right;top:258px;">1,400</div>
<div class="c " style="left:799px;width:90px;text-align:right;top:280px;">1,300</div>
<div class="c " style="left:897px;width:86px;text-align:right;top:280px;">1,300</div>
<div class="c " style="left:991px;width:86px;text-align:right;top:280px;">1,300</div>
<div class="c " style="left:1085px;width:86px;text-align:right;top:280px;">1,300</div>
<div class="c " style="left:1179px;width:86px;text-align:right;top:280px;">1,300</div>
<div class="c " style="left:1273px;width:86px;text-align:right;top:280px;">1,300</div>
<div class="c " style="left:1367px;width:86px;text-align:right;top:280px;">1,300</div>
<div class="c " style="left:1461px;width:86px;text-align:right;top:280px;">1,300</div>
<div class="c " style="left:1555px;width:86px;text-align:right;top:280px;">1,300</div>
<div class="c " style="left:1649px;width:86px;text-align:right;top:280px;">1,300</div>
<div class="c " style="left:1743px;width:86px;text-align:right;top:280px;">1,300</div>
<div class="c " style="left:1837px;width:86px;text-align:right;top:280px;">1,300</div>
<div class="c " style="left:799px;width:90px;text-align:right;top:302px;">1,000</div>
<div class="c " style="left:897px;width:86px;text-align:right;top:302px;">1,000</div>
<div class="c " style="left:991px;width:86px;text-align:right;top:302px;">1,000</div>
<div class="c " style="left:1085px;width:86px;text-align:right;top:302px;">1,000</div>
<div class="c " style="left:1179px;width:86px;text-align:right;top:302px;">1,000</div>
<div class="c " style="left:1273px;width:86px;text-align:right;top:302px;">1,000</div>
<div class="c " style="left:1367px;width:86px;text-align:right;top:302px;">1,000</div>
<div class="c " style="left:1461px;width:86px;text-align:right;top:302px;">1,000</div>
<div class="c " style="left:1555px;width:86px;text-align:right;top:302px;">1,000</div>
<div class="c " style="left:1649px;width:86px;text-align:right;top:302px;">1,000</div>
<div class="c " style="left:1743px;width:86px;text-align:right;top:302px;">1,000</div>
<div class="c " style="left:1837px;width:86px;text-align:right;top:302px;">1,000</div>
<div class="c " style="left:799px;width:90px;text-align:right;top:324px;">500</div>
<div class="c " style="left:897px;width:86px;text-align:right;top:324px;">500</div>
<div class="c " style="left:991px;width:86px;text-align:right;top:324px;">500</div>
<div class="c " style="left:1085px;width:86px;text-align:right;top:324px;">500</div>
<div class="c " style="left:1179px;width:86px;text-align:right;top:324px;">500</div>
<div class="c " style="left:1273px;width:86px;text-align:right;top:324px;">500</div>
<div class="c " style="left:1367px;width:86px;text-align:right;top:324px;">500</div>
<div class="c " style="left:1461px;width:86px;text-align:right;top:324px;">500</div>
<div class="c " style="left:1555px;width:86px;text-align:right;top:324px;">500</div>
<div class="c " style="left:1649px;width:86px;text-align:right;top:324px;">500</div>
<div class="c " style="left:1743px;width:86px;text-align:right;top:324px;">500</div>
<div class="c " style="left:1837px;width:86px;text-align:right;top:324px;">500</div>
<div class="abs" style="left:864px;top:357px;width:6px;height:1px;background:linear-gradient(to right,#8a8a8a 0 1px,#000 1px 5px,#8a8a8a 5px 6px)"></div>
<div class="abs" style="left:958px;top:357px;width:6px;height:1px;background:linear-gradient(to right,#8a8a8a 0 1px,#000 1px 5px,#8a8a8a 5px 6px)"></div>
<div class="c " style="left:991px;width:86px;text-align:right;top:346px;">500</div>
<div class="c " style="left:1085px;width:86px;text-align:right;top:346px;">500</div>
<div class="c " style="left:1179px;width:86px;text-align:right;top:346px;">500</div>
<div class="c " style="left:1273px;width:86px;text-align:right;top:346px;">500</div>
<div class="c " style="left:1367px;width:86px;text-align:right;top:346px;">500</div>
<div class="c " style="left:1461px;width:86px;text-align:right;top:346px;">500</div>
<div class="c " style="left:1555px;width:86px;text-align:right;top:346px;">500</div>
<div class="c " style="left:1649px;width:86px;text-align:right;top:346px;">500</div>
<div class="c " style="left:1743px;width:86px;text-align:right;top:346px;">500</div>
<div class="c " style="left:1837px;width:86px;text-align:right;top:346px;">500</div>
<div class="abs" style="left:864px;top:379px;width:6px;height:1px;background:linear-gradient(to right,#8a8a8a 0 1px,#000 1px 5px,#8a8a8a 5px 6px)"></div>
<div class="abs" style="left:958px;top:379px;width:6px;height:1px;background:linear-gradient(to right,#8a8a8a 0 1px,#000 1px 5px,#8a8a8a 5px 6px)"></div>
<div class="c " style="left:991px;width:86px;text-align:right;top:368px;">500</div>
<div class="c " style="left:1085px;width:86px;text-align:right;top:368px;">500</div>
<div class="c " style="left:1179px;width:86px;text-align:right;top:368px;">500</div>
<div class="c " style="left:1273px;width:86px;text-align:right;top:368px;">500</div>
<div class="c " style="left:1367px;width:86px;text-align:right;top:368px;">500</div>
<div class="c " style="left:1461px;width:86px;text-align:right;top:368px;">500</div>
<div class="c " style="left:1555px;width:86px;text-align:right;top:368px;">500</div>
<div class="c " style="left:1649px;width:86px;text-align:right;top:368px;">500</div>
<div class="c " style="left:1743px;width:86px;text-align:right;top:368px;">500</div>
<div class="c " style="left:1837px;width:86px;text-align:right;top:368px;">500</div>
<div class="abs" style="left:864px;top:401px;width:6px;height:1px;background:linear-gradient(to right,#8a8a8a 0 1px,#000 1px 5px,#8a8a8a 5px 6px)"></div>
<div class="abs" style="left:958px;top:401px;width:6px;height:1px;background:linear-gradient(to right,#8a8a8a 0 1px,#000 1px 5px,#8a8a8a 5px 6px)"></div>
<div class="c " style="left:991px;width:86px;text-align:right;top:390px;">500</div>
<div class="c " style="left:1085px;width:86px;text-align:right;top:390px;">500</div>
<div class="c " style="left:1179px;width:86px;text-align:right;top:390px;">500</div>
<div class="c " style="left:1273px;width:86px;text-align:right;top:390px;">500</div>
<div class="c " style="left:1367px;width:86px;text-align:right;top:390px;">500</div>
<div class="c " style="left:1461px;width:86px;text-align:right;top:390px;">500</div>
<div class="c " style="left:1555px;width:86px;text-align:right;top:390px;">500</div>
<div class="c " style="left:1649px;width:86px;text-align:right;top:390px;">500</div>
<div class="c " style="left:1743px;width:86px;text-align:right;top:390px;">500</div>
<div class="c " style="left:1837px;width:86px;text-align:right;top:390px;">500</div>
<div class="abs" style="left:864px;top:423px;width:6px;height:1px;background:linear-gradient(to right,#8a8a8a 0 1px,#000 1px 5px,#8a8a8a 5px 6px)"></div>
<div class="abs" style="left:958px;top:423px;width:6px;height:1px;background:linear-gradient(to right,#8a8a8a 0 1px,#000 1px 5px,#8a8a8a 5px 6px)"></div>
<div class="c " style="left:991px;width:86px;text-align:right;top:412px;">500</div>
<div class="c " style="left:1085px;width:86px;text-align:right;top:412px;">500</div>
<div class="c " style="left:1179px;width:86px;text-align:right;top:412px;">500</div>
<div class="c " style="left:1273px;width:86px;text-align:right;top:412px;">500</div>
<div class="c " style="left:1367px;width:86px;text-align:right;top:412px;">500</div>
<div class="c " style="left:1461px;width:86px;text-align:right;top:412px;">500</div>
<div class="c " style="left:1555px;width:86px;text-align:right;top:412px;">500</div>
<div class="c " style="left:1649px;width:86px;text-align:right;top:412px;">500</div>
<div class="c " style="left:1743px;width:86px;text-align:right;top:412px;">500</div>
<div class="c " style="left:1837px;width:86px;text-align:right;top:412px;">500</div>
<div class="abs" style="left:864px;top:445px;width:6px;height:1px;background:linear-gradient(to right,#8a8a8a 0 1px,#000 1px 5px,#8a8a8a 5px 6px)"></div>
<div class="abs" style="left:958px;top:445px;width:6px;height:1px;background:linear-gradient(to right,#8a8a8a 0 1px,#000 1px 5px,#8a8a8a 5px 6px)"></div>
<div class="c " style="left:991px;width:86px;text-align:right;top:434px;">500</div>
<div class="c " style="left:1085px;width:86px;text-align:right;top:434px;">500</div>
<div class="c " style="left:1179px;width:86px;text-align:right;top:434px;">500</div>
<div class="c " style="left:1273px;width:86px;text-align:right;top:434px;">500</div>
<div class="c " style="left:1367px;width:86px;text-align:right;top:434px;">500</div>
<div class="c " style="left:1461px;width:86px;text-align:right;top:434px;">500</div>
<div class="c " style="left:1555px;width:86px;text-align:right;top:434px;">500</div>
<div class="c " style="left:1649px;width:86px;text-align:right;top:434px;">500</div>
<div class="c " style="left:1743px;width:86px;text-align:right;top:434px;">500</div>
<div class="c " style="left:1837px;width:86px;text-align:right;top:434px;">500</div>
<div class="abs" style="left:864px;top:467px;width:6px;height:1px;background:linear-gradient(to right,#8a8a8a 0 1px,#000 1px 5px,#8a8a8a 5px 6px)"></div>
<div class="abs" style="left:958px;top:467px;width:6px;height:1px;background:linear-gradient(to right,#8a8a8a 0 1px,#000 1px 5px,#8a8a8a 5px 6px)"></div>
<div class="abs" style="left:1052px;top:467px;width:6px;height:1px;background:linear-gradient(to right,#8a8a8a 0 1px,#000 1px 5px,#8a8a8a 5px 6px)"></div>
<div class="abs" style="left:1146px;top:467px;width:6px;height:1px;background:linear-gradient(to right,#8a8a8a 0 1px,#000 1px 5px,#8a8a8a 5px 6px)"></div>
<div class="abs" style="left:1240px;top:467px;width:6px;height:1px;background:linear-gradient(to right,#8a8a8a 0 1px,#000 1px 5px,#8a8a8a 5px 6px)"></div>
<div class="c " style="left:1273px;width:86px;text-align:right;top:456px;">500</div>
<div class="c " style="left:1367px;width:86px;text-align:right;top:456px;">500</div>
<div class="c " style="left:1461px;width:86px;text-align:right;top:456px;">500</div>
<div class="c " style="left:1555px;width:86px;text-align:right;top:456px;">500</div>
<div class="c " style="left:1649px;width:86px;text-align:right;top:456px;">500</div>
<div class="c " style="left:1743px;width:86px;text-align:right;top:456px;">500</div>
<div class="c " style="left:1837px;width:86px;text-align:right;top:456px;">500</div>
<div class="abs" style="left:864px;top:489px;width:6px;height:1px;background:linear-gradient(to right,#8a8a8a 0 1px,#000 1px 5px,#8a8a8a 5px 6px)"></div>
<div class="abs" style="left:958px;top:489px;width:6px;height:1px;background:linear-gradient(to right,#8a8a8a 0 1px,#000 1px 5px,#8a8a8a 5px 6px)"></div>
<div class="abs" style="left:1052px;top:489px;width:6px;height:1px;background:linear-gradient(to right,#8a8a8a 0 1px,#000 1px 5px,#8a8a8a 5px 6px)"></div>
<div class="abs" style="left:1146px;top:489px;width:6px;height:1px;background:linear-gradient(to right,#8a8a8a 0 1px,#000 1px 5px,#8a8a8a 5px 6px)"></div>
<div class="abs" style="left:1240px;top:489px;width:6px;height:1px;background:linear-gradient(to right,#8a8a8a 0 1px,#000 1px 5px,#8a8a8a 5px 6px)"></div>
<div class="c " style="left:1273px;width:86px;text-align:right;top:478px;">500</div>
<div class="c " style="left:1367px;width:86px;text-align:right;top:478px;">500</div>
<div class="c " style="left:1461px;width:86px;text-align:right;top:478px;">500</div>
<div class="c " style="left:1555px;width:86px;text-align:right;top:478px;">500</div>
<div class="c " style="left:1649px;width:86px;text-align:right;top:478px;">500</div>
<div class="c " style="left:1743px;width:86px;text-align:right;top:478px;">500</div>
<div class="c " style="left:1837px;width:86px;text-align:right;top:478px;">500</div>
<div class="abs" style="left:864px;top:511px;width:6px;height:1px;background:linear-gradient(to right,#8a8a8a 0 1px,#000 1px 5px,#8a8a8a 5px 6px)"></div>
<div class="abs" style="left:958px;top:511px;width:6px;height:1px;background:linear-gradient(to right,#8a8a8a 0 1px,#000 1px 5px,#8a8a8a 5px 6px)"></div>
<div class="abs" style="left:1052px;top:511px;width:6px;height:1px;background:linear-gradient(to right,#8a8a8a 0 1px,#000 1px 5px,#8a8a8a 5px 6px)"></div>
<div class="abs" style="left:1146px;top:511px;width:6px;height:1px;background:linear-gradient(to right,#8a8a8a 0 1px,#000 1px 5px,#8a8a8a 5px 6px)"></div>
<div class="abs" style="left:1240px;top:511px;width:6px;height:1px;background:linear-gradient(to right,#8a8a8a 0 1px,#000 1px 5px,#8a8a8a 5px 6px)"></div>
<div class="c " style="left:1273px;width:86px;text-align:right;top:500px;">500</div>
<div class="c " style="left:1367px;width:86px;text-align:right;top:500px;">500</div>
<div class="c " style="left:1461px;width:86px;text-align:right;top:500px;">500</div>
<div class="c " style="left:1555px;width:86px;text-align:right;top:500px;">500</div>
<div class="c " style="left:1649px;width:86px;text-align:right;top:500px;">500</div>
<div class="c " style="left:1743px;width:86px;text-align:right;top:500px;">500</div>
<div class="c " style="left:1837px;width:86px;text-align:right;top:500px;">500</div>
<div class="abs" style="left:864px;top:533px;width:6px;height:1px;background:linear-gradient(to right,#8a8a8a 0 1px,#000 1px 5px,#8a8a8a 5px 6px)"></div>
<div class="abs" style="left:958px;top:533px;width:6px;height:1px;background:linear-gradient(to right,#8a8a8a 0 1px,#000 1px 5px,#8a8a8a 5px 6px)"></div>
<div class="abs" style="left:1052px;top:533px;width:6px;height:1px;background:linear-gradient(to right,#8a8a8a 0 1px,#000 1px 5px,#8a8a8a 5px 6px)"></div>
<div class="abs" style="left:1146px;top:533px;width:6px;height:1px;background:linear-gradient(to right,#8a8a8a 0 1px,#000 1px 5px,#8a8a8a 5px 6px)"></div>
<div class="abs" style="left:1240px;top:533px;width:6px;height:1px;background:linear-gradient(to right,#8a8a8a 0 1px,#000 1px 5px,#8a8a8a 5px 6px)"></div>
<div class="c " style="left:1273px;width:86px;text-align:right;top:522px;">500</div>
<div class="c " style="left:1367px;width:86px;text-align:right;top:522px;">500</div>
<div class="c " style="left:1461px;width:86px;text-align:right;top:522px;">500</div>
<div class="c " style="left:1555px;width:86px;text-align:right;top:522px;">500</div>
<div class="c " style="left:1649px;width:86px;text-align:right;top:522px;">500</div>
<div class="c " style="left:1743px;width:86px;text-align:right;top:522px;">500</div>
<div class="c " style="left:1837px;width:86px;text-align:right;top:522px;">500</div>
<div class="abs" style="left:864px;top:555px;width:6px;height:1px;background:linear-gradient(to right,#8a8a8a 0 1px,#000 1px 5px,#8a8a8a 5px 6px)"></div>
<div class="abs" style="left:958px;top:555px;width:6px;height:1px;background:linear-gradient(to right,#8a8a8a 0 1px,#000 1px 5px,#8a8a8a 5px 6px)"></div>
<div class="abs" style="left:1052px;top:555px;width:6px;height:1px;background:linear-gradient(to right,#8a8a8a 0 1px,#000 1px 5px,#8a8a8a 5px 6px)"></div>
<div class="abs" style="left:1146px;top:555px;width:6px;height:1px;background:linear-gradient(to right,#8a8a8a 0 1px,#000 1px 5px,#8a8a8a 5px 6px)"></div>
<div class="abs" style="left:1240px;top:555px;width:6px;height:1px;background:linear-gradient(to right,#8a8a8a 0 1px,#000 1px 5px,#8a8a8a 5px 6px)"></div>
<div class="abs" style="left:1334px;top:555px;width:6px;height:1px;background:linear-gradient(to right,#8a8a8a 0 1px,#000 1px 5px,#8a8a8a 5px 6px)"></div>
<div class="abs" style="left:1428px;top:555px;width:6px;height:1px;background:linear-gradient(to right,#8a8a8a 0 1px,#000 1px 5px,#8a8a8a 5px 6px)"></div>
<div class="abs" style="left:1522px;top:555px;width:6px;height:1px;background:linear-gradient(to right,#8a8a8a 0 1px,#000 1px 5px,#8a8a8a 5px 6px)"></div>
<div class="abs" style="left:1616px;top:555px;width:6px;height:1px;background:linear-gradient(to right,#8a8a8a 0 1px,#000 1px 5px,#8a8a8a 5px 6px)"></div>
<div class="abs" style="left:1710px;top:555px;width:6px;height:1px;background:linear-gradient(to right,#8a8a8a 0 1px,#000 1px 5px,#8a8a8a 5px 6px)"></div>
<div class="abs" style="left:1804px;top:555px;width:6px;height:1px;background:linear-gradient(to right,#8a8a8a 0 1px,#000 1px 5px,#8a8a8a 5px 6px)"></div>
<div class="abs" style="left:1898px;top:555px;width:6px;height:1px;background:linear-gradient(to right,#8a8a8a 0 1px,#000 1px 5px,#8a8a8a 5px 6px)"></div>
<div class="abs" style="left:864px;top:577px;width:6px;height:1px;background:linear-gradient(to right,#8a8a8a 0 1px,#000 1px 5px,#8a8a8a 5px 6px)"></div>
<div class="abs" style="left:958px;top:577px;width:6px;height:1px;background:linear-gradient(to right,#8a8a8a 0 1px,#000 1px 5px,#8a8a8a 5px 6px)"></div>
<div class="abs" style="left:1052px;top:577px;width:6px;height:1px;background:linear-gradient(to right,#8a8a8a 0 1px,#000 1px 5px,#8a8a8a 5px 6px)"></div>
<div class="abs" style="left:1146px;top:577px;width:6px;height:1px;background:linear-gradient(to right,#8a8a8a 0 1px,#000 1px 5px,#8a8a8a 5px 6px)"></div>
<div class="abs" style="left:1240px;top:577px;width:6px;height:1px;background:linear-gradient(to right,#8a8a8a 0 1px,#000 1px 5px,#8a8a8a 5px 6px)"></div>
<div class="abs" style="left:1334px;top:577px;width:6px;height:1px;background:linear-gradient(to right,#8a8a8a 0 1px,#000 1px 5px,#8a8a8a 5px 6px)"></div>
<div class="abs" style="left:1428px;top:577px;width:6px;height:1px;background:linear-gradient(to right,#8a8a8a 0 1px,#000 1px 5px,#8a8a8a 5px 6px)"></div>
<div class="abs" style="left:1522px;top:577px;width:6px;height:1px;background:linear-gradient(to right,#8a8a8a 0 1px,#000 1px 5px,#8a8a8a 5px 6px)"></div>
<div class="abs" style="left:1616px;top:577px;width:6px;height:1px;background:linear-gradient(to right,#8a8a8a 0 1px,#000 1px 5px,#8a8a8a 5px 6px)"></div>
<div class="abs" style="left:1710px;top:577px;width:6px;height:1px;background:linear-gradient(to right,#8a8a8a 0 1px,#000 1px 5px,#8a8a8a 5px 6px)"></div>
<div class="abs" style="left:1804px;top:577px;width:6px;height:1px;background:linear-gradient(to right,#8a8a8a 0 1px,#000 1px 5px,#8a8a8a 5px 6px)"></div>
<div class="abs" style="left:1898px;top:577px;width:6px;height:1px;background:linear-gradient(to right,#8a8a8a 0 1px,#000 1px 5px,#8a8a8a 5px 6px)"></div>
<div class="abs" style="left:864px;top:599px;width:6px;height:1px;background:linear-gradient(to right,#8a8a8a 0 1px,#000 1px 5px,#8a8a8a 5px 6px)"></div>
<div class="abs" style="left:958px;top:599px;width:6px;height:1px;background:linear-gradient(to right,#8a8a8a 0 1px,#000 1px 5px,#8a8a8a 5px 6px)"></div>
<div class="abs" style="left:1052px;top:599px;width:6px;height:1px;background:linear-gradient(to right,#8a8a8a 0 1px,#000 1px 5px,#8a8a8a 5px 6px)"></div>
<div class="abs" style="left:1146px;top:599px;width:6px;height:1px;background:linear-gradient(to right,#8a8a8a 0 1px,#000 1px 5px,#8a8a8a 5px 6px)"></div>
<div class="abs" style="left:1240px;top:599px;width:6px;height:1px;background:linear-gradient(to right,#8a8a8a 0 1px,#000 1px 5px,#8a8a8a 5px 6px)"></div>
<div class="abs" style="left:1334px;top:599px;width:6px;height:1px;background:linear-gradient(to right,#8a8a8a 0 1px,#000 1px 5px,#8a8a8a 5px 6px)"></div>
<div class="abs" style="left:1428px;top:599px;width:6px;height:1px;background:linear-gradient(to right,#8a8a8a 0 1px,#000 1px 5px,#8a8a8a 5px 6px)"></div>
<div class="abs" style="left:1522px;top:599px;width:6px;height:1px;background:linear-gradient(to right,#8a8a8a 0 1px,#000 1px 5px,#8a8a8a 5px 6px)"></div>
<div class="abs" style="left:1616px;top:599px;width:6px;height:1px;background:linear-gradient(to right,#8a8a8a 0 1px,#000 1px 5px,#8a8a8a 5px 6px)"></div>
<div class="abs" style="left:1710px;top:599px;width:6px;height:1px;background:linear-gradient(to right,#8a8a8a 0 1px,#000 1px 5px,#8a8a8a 5px 6px)"></div>
<div class="abs" style="left:1804px;top:599px;width:6px;height:1px;background:linear-gradient(to right,#8a8a8a 0 1px,#000 1px 5px,#8a8a8a 5px 6px)"></div>
<div class="abs" style="left:1898px;top:599px;width:6px;height:1px;background:linear-gradient(to right,#8a8a8a 0 1px,#000 1px 5px,#8a8a8a 5px 6px)"></div>
<div class="abs" style="left:864px;top:621px;width:6px;height:1px;background:linear-gradient(to right,#8a8a8a 0 1px,#000 1px 5px,#8a8a8a 5px 6px)"></div>
<div class="abs" style="left:958px;top:621px;width:6px;height:1px;background:linear-gradient(to right,#8a8a8a 0 1px,#000 1px 5px,#8a8a8a 5px 6px)"></div>
<div class="abs" style="left:1052px;top:621px;width:6px;height:1px;background:linear-gradient(to right,#8a8a8a 0 1px,#000 1px 5px,#8a8a8a 5px 6px)"></div>
<div class="abs" style="left:1146px;top:621px;width:6px;height:1px;background:linear-gradient(to right,#8a8a8a 0 1px,#000 1px 5px,#8a8a8a 5px 6px)"></div>
<div class="abs" style="left:1240px;top:621px;width:6px;height:1px;background:linear-gradient(to right,#8a8a8a 0 1px,#000 1px 5px,#8a8a8a 5px 6px)"></div>
<div class="abs" style="left:1334px;top:621px;width:6px;height:1px;background:linear-gradient(to right,#8a8a8a 0 1px,#000 1px 5px,#8a8a8a 5px 6px)"></div>
<div class="abs" style="left:1428px;top:621px;width:6px;height:1px;background:linear-gradient(to right,#8a8a8a 0 1px,#000 1px 5px,#8a8a8a 5px 6px)"></div>
<div class="abs" style="left:1522px;top:621px;width:6px;height:1px;background:linear-gradient(to right,#8a8a8a 0 1px,#000 1px 5px,#8a8a8a 5px 6px)"></div>
<div class="abs" style="left:1616px;top:621px;width:6px;height:1px;background:linear-gradient(to right,#8a8a8a 0 1px,#000 1px 5px,#8a8a8a 5px 6px)"></div>
<div class="abs" style="left:1710px;top:621px;width:6px;height:1px;background:linear-gradient(to right,#8a8a8a 0 1px,#000 1px 5px,#8a8a8a 5px 6px)"></div>
<div class="abs" style="left:1804px;top:621px;width:6px;height:1px;background:linear-gradient(to right,#8a8a8a 0 1px,#000 1px 5px,#8a8a8a 5px 6px)"></div>
<div class="abs" style="left:1898px;top:621px;width:6px;height:1px;background:linear-gradient(to right,#8a8a8a 0 1px,#000 1px 5px,#8a8a8a 5px 6px)"></div>
<div class="abs" style="left:864px;top:643px;width:6px;height:1px;background:linear-gradient(to right,#8a8a8a 0 1px,#000 1px 5px,#8a8a8a 5px 6px)"></div>
<div class="abs" style="left:958px;top:643px;width:6px;height:1px;background:linear-gradient(to right,#8a8a8a 0 1px,#000 1px 5px,#8a8a8a 5px 6px)"></div>
<div class="abs" style="left:1052px;top:643px;width:6px;height:1px;background:linear-gradient(to right,#8a8a8a 0 1px,#000 1px 5px,#8a8a8a 5px 6px)"></div>
<div class="abs" style="left:1146px;top:643px;width:6px;height:1px;background:linear-gradient(to right,#8a8a8a 0 1px,#000 1px 5px,#8a8a8a 5px 6px)"></div>
<div class="abs" style="left:1240px;top:643px;width:6px;height:1px;background:linear-gradient(to right,#8a8a8a 0 1px,#000 1px 5px,#8a8a8a 5px 6px)"></div>
<div class="abs" style="left:1334px;top:643px;width:6px;height:1px;background:linear-gradient(to right,#8a8a8a 0 1px,#000 1px 5px,#8a8a8a 5px 6px)"></div>
<div class="abs" style="left:1428px;top:643px;width:6px;height:1px;background:linear-gradient(to right,#8a8a8a 0 1px,#000 1px 5px,#8a8a8a 5px 6px)"></div>
<div class="abs" style="left:1522px;top:643px;width:6px;height:1px;background:linear-gradient(to right,#8a8a8a 0 1px,#000 1px 5px,#8a8a8a 5px 6px)"></div>
<div class="abs" style="left:1616px;top:643px;width:6px;height:1px;background:linear-gradient(to right,#8a8a8a 0 1px,#000 1px 5px,#8a8a8a 5px 6px)"></div>
<div class="abs" style="left:1710px;top:643px;width:6px;height:1px;background:linear-gradient(to right,#8a8a8a 0 1px,#000 1px 5px,#8a8a8a 5px 6px)"></div>
<div class="abs" style="left:1804px;top:643px;width:6px;height:1px;background:linear-gradient(to right,#8a8a8a 0 1px,#000 1px 5px,#8a8a8a 5px 6px)"></div>
<div class="abs" style="left:1898px;top:643px;width:6px;height:1px;background:linear-gradient(to right,#8a8a8a 0 1px,#000 1px 5px,#8a8a8a 5px 6px)"></div>
<div class="abs" style="left:864px;top:665px;width:6px;height:1px;background:linear-gradient(to right,#8a8a8a 0 1px,#000 1px 5px,#8a8a8a 5px 6px)"></div>
<div class="abs" style="left:958px;top:665px;width:6px;height:1px;background:linear-gradient(to right,#8a8a8a 0 1px,#000 1px 5px,#8a8a8a 5px 6px)"></div>
<div class="abs" style="left:1052px;top:665px;width:6px;height:1px;background:linear-gradient(to right,#8a8a8a 0 1px,#000 1px 5px,#8a8a8a 5px 6px)"></div>
<div class="abs" style="left:1146px;top:665px;width:6px;height:1px;background:linear-gradient(to right,#8a8a8a 0 1px,#000 1px 5px,#8a8a8a 5px 6px)"></div>
<div class="abs" style="left:1240px;top:665px;width:6px;height:1px;background:linear-gradient(to right,#8a8a8a 0 1px,#000 1px 5px,#8a8a8a 5px 6px)"></div>
<div class="abs" style="left:1334px;top:665px;width:6px;height:1px;background:linear-gradient(to right,#8a8a8a 0 1px,#000 1px 5px,#8a8a8a 5px 6px)"></div>
<div class="abs" style="left:1428px;top:665px;width:6px;height:1px;background:linear-gradient(to right,#8a8a8a 0 1px,#000 1px 5px,#8a8a8a 5px 6px)"></div>
<div class="abs" style="left:1522px;top:665px;width:6px;height:1px;background:linear-gradient(to right,#8a8a8a 0 1px,#000 1px 5px,#8a8a8a 5px 6px)"></div>
<div class="abs" style="left:1616px;top:665px;width:6px;height:1px;background:linear-gradient(to right,#8a8a8a 0 1px,#000 1px 5px,#8a8a8a 5px 6px)"></div>
<div class="abs" style="left:1710px;top:665px;width:6px;height:1px;background:linear-gradient(to right,#8a8a8a 0 1px,#000 1px 5px,#8a8a8a 5px 6px)"></div>
<div class="abs" style="left:1804px;top:665px;width:6px;height:1px;background:linear-gradient(to right,#8a8a8a 0 1px,#000 1px 5px,#8a8a8a 5px 6px)"></div>
<div class="abs" style="left:1898px;top:665px;width:6px;height:1px;background:linear-gradient(to right,#8a8a8a 0 1px,#000 1px 5px,#8a8a8a 5px 6px)"></div>
<div class="abs" style="left:864px;top:687px;width:6px;height:1px;background:linear-gradient(to right,#8a8a8a 0 1px,#000 1px 5px,#8a8a8a 5px 6px)"></div>
<div class="abs" style="left:958px;top:687px;width:6px;height:1px;background:linear-gradient(to right,#8a8a8a 0 1px,#000 1px 5px,#8a8a8a 5px 6px)"></div>
<div class="abs" style="left:1052px;top:687px;width:6px;height:1px;background:linear-gradient(to right,#8a8a8a 0 1px,#000 1px 5px,#8a8a8a 5px 6px)"></div>
<div class="abs" style="left:1146px;top:687px;width:6px;height:1px;background:linear-gradient(to right,#8a8a8a 0 1px,#000 1px 5px,#8a8a8a 5px 6px)"></div>
<div class="abs" style="left:1240px;top:687px;width:6px;height:1px;background:linear-gradient(to right,#8a8a8a 0 1px,#000 1px 5px,#8a8a8a 5px 6px)"></div>
<div class="abs" style="left:1334px;top:687px;width:6px;height:1px;background:linear-gradient(to right,#8a8a8a 0 1px,#000 1px 5px,#8a8a8a 5px 6px)"></div>
<div class="abs" style="left:1428px;top:687px;width:6px;height:1px;background:linear-gradient(to right,#8a8a8a 0 1px,#000 1px 5px,#8a8a8a 5px 6px)"></div>
<div class="abs" style="left:1522px;top:687px;width:6px;height:1px;background:linear-gradient(to right,#8a8a8a 0 1px,#000 1px 5px,#8a8a8a 5px 6px)"></div>
<div class="abs" style="left:1616px;top:687px;width:6px;height:1px;background:linear-gradient(to right,#8a8a8a 0 1px,#000 1px 5px,#8a8a8a 5px 6px)"></div>
<div class="abs" style="left:1710px;top:687px;width:6px;height:1px;background:linear-gradient(to right,#8a8a8a 0 1px,#000 1px 5px,#8a8a8a 5px 6px)"></div>
<div class="abs" style="left:1804px;top:687px;width:6px;height:1px;background:linear-gradient(to right,#8a8a8a 0 1px,#000 1px 5px,#8a8a8a 5px 6px)"></div>
<div class="abs" style="left:1898px;top:687px;width:6px;height:1px;background:linear-gradient(to right,#8a8a8a 0 1px,#000 1px 5px,#8a8a8a 5px 6px)"></div>
<div class="abs" style="left:864px;top:709px;width:6px;height:1px;background:linear-gradient(to right,#8a8a8a 0 1px,#000 1px 5px,#8a8a8a 5px 6px)"></div>
<div class="abs" style="left:958px;top:709px;width:6px;height:1px;background:linear-gradient(to right,#8a8a8a 0 1px,#000 1px 5px,#8a8a8a 5px 6px)"></div>
<div class="abs" style="left:1052px;top:709px;width:6px;height:1px;background:linear-gradient(to right,#8a8a8a 0 1px,#000 1px 5px,#8a8a8a 5px 6px)"></div>
<div class="abs" style="left:1146px;top:709px;width:6px;height:1px;background:linear-gradient(to right,#8a8a8a 0 1px,#000 1px 5px,#8a8a8a 5px 6px)"></div>
<div class="abs" style="left:1240px;top:709px;width:6px;height:1px;background:linear-gradient(to right,#8a8a8a 0 1px,#000 1px 5px,#8a8a8a 5px 6px)"></div>
<div class="abs" style="left:1334px;top:709px;width:6px;height:1px;background:linear-gradient(to right,#8a8a8a 0 1px,#000 1px 5px,#8a8a8a 5px 6px)"></div>
<div class="abs" style="left:1428px;top:709px;width:6px;height:1px;background:linear-gradient(to right,#8a8a8a 0 1px,#000 1px 5px,#8a8a8a 5px 6px)"></div>
<div class="abs" style="left:1522px;top:709px;width:6px;height:1px;background:linear-gradient(to right,#8a8a8a 0 1px,#000 1px 5px,#8a8a8a 5px 6px)"></div>
<div class="abs" style="left:1616px;top:709px;width:6px;height:1px;background:linear-gradient(to right,#8a8a8a 0 1px,#000 1px 5px,#8a8a8a 5px 6px)"></div>
<div class="abs" style="left:1710px;top:709px;width:6px;height:1px;background:linear-gradient(to right,#8a8a8a 0 1px,#000 1px 5px,#8a8a8a 5px 6px)"></div>
<div class="abs" style="left:1804px;top:709px;width:6px;height:1px;background:linear-gradient(to right,#8a8a8a 0 1px,#000 1px 5px,#8a8a8a 5px 6px)"></div>
<div class="abs" style="left:1898px;top:709px;width:6px;height:1px;background:linear-gradient(to right,#8a8a8a 0 1px,#000 1px 5px,#8a8a8a 5px 6px)"></div>
<div class="abs" style="left:864px;top:731px;width:6px;height:1px;background:linear-gradient(to right,#8a8a8a 0 1px,#000 1px 5px,#8a8a8a 5px 6px)"></div>
<div class="abs" style="left:958px;top:731px;width:6px;height:1px;background:linear-gradient(to right,#8a8a8a 0 1px,#000 1px 5px,#8a8a8a 5px 6px)"></div>
<div class="abs" style="left:1052px;top:731px;width:6px;height:1px;background:linear-gradient(to right,#8a8a8a 0 1px,#000 1px 5px,#8a8a8a 5px 6px)"></div>
<div class="abs" style="left:1146px;top:731px;width:6px;height:1px;background:linear-gradient(to right,#8a8a8a 0 1px,#000 1px 5px,#8a8a8a 5px 6px)"></div>
<div class="abs" style="left:1240px;top:731px;width:6px;height:1px;background:linear-gradient(to right,#8a8a8a 0 1px,#000 1px 5px,#8a8a8a 5px 6px)"></div>
<div class="abs" style="left:1334px;top:731px;width:6px;height:1px;background:linear-gradient(to right,#8a8a8a 0 1px,#000 1px 5px,#8a8a8a 5px 6px)"></div>
<div class="abs" style="left:1428px;top:731px;width:6px;height:1px;background:linear-gradient(to right,#8a8a8a 0 1px,#000 1px 5px,#8a8a8a 5px 6px)"></div>
<div class="abs" style="left:1522px;top:731px;width:6px;height:1px;background:linear-gradient(to right,#8a8a8a 0 1px,#000 1px 5px,#8a8a8a 5px 6px)"></div>
<div class="abs" style="left:1616px;top:731px;width:6px;height:1px;background:linear-gradient(to right,#8a8a8a 0 1px,#000 1px 5px,#8a8a8a 5px 6px)"></div>
<div class="abs" style="left:1710px;top:731px;width:6px;height:1px;background:linear-gradient(to right,#8a8a8a 0 1px,#000 1px 5px,#8a8a8a 5px 6px)"></div>
<div class="abs" style="left:1804px;top:731px;width:6px;height:1px;background:linear-gradient(to right,#8a8a8a 0 1px,#000 1px 5px,#8a8a8a 5px 6px)"></div>
<div class="abs" style="left:1898px;top:731px;width:6px;height:1px;background:linear-gradient(to right,#8a8a8a 0 1px,#000 1px 5px,#8a8a8a 5px 6px)"></div>
<div class="abs" style="left:864px;top:753px;width:6px;height:1px;background:linear-gradient(to right,#8a8a8a 0 1px,#000 1px 5px,#8a8a8a 5px 6px)"></div>
<div class="abs" style="left:958px;top:753px;width:6px;height:1px;background:linear-gradient(to right,#8a8a8a 0 1px,#000 1px 5px,#8a8a8a 5px 6px)"></div>
<div class="abs" style="left:1052px;top:753px;width:6px;height:1px;background:linear-gradient(to right,#8a8a8a 0 1px,#000 1px 5px,#8a8a8a 5px 6px)"></div>
<div class="abs" style="left:1146px;top:753px;width:6px;height:1px;background:linear-gradient(to right,#8a8a8a 0 1px,#000 1px 5px,#8a8a8a 5px 6px)"></div>
<div class="abs" style="left:1240px;top:753px;width:6px;height:1px;background:linear-gradient(to right,#8a8a8a 0 1px,#000 1px 5px,#8a8a8a 5px 6px)"></div>
<div class="abs" style="left:1334px;top:753px;width:6px;height:1px;background:linear-gradient(to right,#8a8a8a 0 1px,#000 1px 5px,#8a8a8a 5px 6px)"></div>
<div class="abs" style="left:1428px;top:753px;width:6px;height:1px;background:linear-gradient(to right,#8a8a8a 0 1px,#000 1px 5px,#8a8a8a 5px 6px)"></div>
<div class="abs" style="left:1522px;top:753px;width:6px;height:1px;background:linear-gradient(to right,#8a8a8a 0 1px,#000 1px 5px,#8a8a8a 5px 6px)"></div>
<div class="abs" style="left:1616px;top:753px;width:6px;height:1px;background:linear-gradient(to right,#8a8a8a 0 1px,#000 1px 5px,#8a8a8a 5px 6px)"></div>
<div class="abs" style="left:1710px;top:753px;width:6px;height:1px;background:linear-gradient(to right,#8a8a8a 0 1px,#000 1px 5px,#8a8a8a 5px 6px)"></div>
<div class="abs" style="left:1804px;top:753px;width:6px;height:1px;background:linear-gradient(to right,#8a8a8a 0 1px,#000 1px 5px,#8a8a8a 5px 6px)"></div>
<div class="abs" style="left:1898px;top:753px;width:6px;height:1px;background:linear-gradient(to right,#8a8a8a 0 1px,#000 1px 5px,#8a8a8a 5px 6px)"></div>
<div class="abs" style="left:864px;top:775px;width:6px;height:1px;background:linear-gradient(to right,#8a8a8a 0 1px,#000 1px 5px,#8a8a8a 5px 6px)"></div>
<div class="abs" style="left:958px;top:775px;width:6px;height:1px;background:linear-gradient(to right,#8a8a8a 0 1px,#000 1px 5px,#8a8a8a 5px 6px)"></div>
<div class="abs" style="left:1052px;top:775px;width:6px;height:1px;background:linear-gradient(to right,#8a8a8a 0 1px,#000 1px 5px,#8a8a8a 5px 6px)"></div>
<div class="abs" style="left:1146px;top:775px;width:6px;height:1px;background:linear-gradient(to right,#8a8a8a 0 1px,#000 1px 5px,#8a8a8a 5px 6px)"></div>
<div class="abs" style="left:1240px;top:775px;width:6px;height:1px;background:linear-gradient(to right,#8a8a8a 0 1px,#000 1px 5px,#8a8a8a 5px 6px)"></div>
<div class="abs" style="left:1334px;top:775px;width:6px;height:1px;background:linear-gradient(to right,#8a8a8a 0 1px,#000 1px 5px,#8a8a8a 5px 6px)"></div>
<div class="abs" style="left:1428px;top:775px;width:6px;height:1px;background:linear-gradient(to right,#8a8a8a 0 1px,#000 1px 5px,#8a8a8a 5px 6px)"></div>
<div class="abs" style="left:1522px;top:775px;width:6px;height:1px;background:linear-gradient(to right,#8a8a8a 0 1px,#000 1px 5px,#8a8a8a 5px 6px)"></div>
<div class="abs" style="left:1616px;top:775px;width:6px;height:1px;background:linear-gradient(to right,#8a8a8a 0 1px,#000 1px 5px,#8a8a8a 5px 6px)"></div>
<div class="abs" style="left:1710px;top:775px;width:6px;height:1px;background:linear-gradient(to right,#8a8a8a 0 1px,#000 1px 5px,#8a8a8a 5px 6px)"></div>
<div class="abs" style="left:1804px;top:775px;width:6px;height:1px;background:linear-gradient(to right,#8a8a8a 0 1px,#000 1px 5px,#8a8a8a 5px 6px)"></div>
<div class="abs" style="left:1898px;top:775px;width:6px;height:1px;background:linear-gradient(to right,#8a8a8a 0 1px,#000 1px 5px,#8a8a8a 5px 6px)"></div>
<div class="abs" style="left:864px;top:797px;width:6px;height:1px;background:linear-gradient(to right,#8a8a8a 0 1px,#000 1px 5px,#8a8a8a 5px 6px)"></div>
<div class="abs" style="left:958px;top:797px;width:6px;height:1px;background:linear-gradient(to right,#8a8a8a 0 1px,#000 1px 5px,#8a8a8a 5px 6px)"></div>
<div class="abs" style="left:1052px;top:797px;width:6px;height:1px;background:linear-gradient(to right,#8a8a8a 0 1px,#000 1px 5px,#8a8a8a 5px 6px)"></div>
<div class="abs" style="left:1146px;top:797px;width:6px;height:1px;background:linear-gradient(to right,#8a8a8a 0 1px,#000 1px 5px,#8a8a8a 5px 6px)"></div>
<div class="abs" style="left:1240px;top:797px;width:6px;height:1px;background:linear-gradient(to right,#8a8a8a 0 1px,#000 1px 5px,#8a8a8a 5px 6px)"></div>
<div class="abs" style="left:1334px;top:797px;width:6px;height:1px;background:linear-gradient(to right,#8a8a8a 0 1px,#000 1px 5px,#8a8a8a 5px 6px)"></div>
<div class="abs" style="left:1428px;top:797px;width:6px;height:1px;background:linear-gradient(to right,#8a8a8a 0 1px,#000 1px 5px,#8a8a8a 5px 6px)"></div>
<div class="abs" style="left:1522px;top:797px;width:6px;height:1px;background:linear-gradient(to right,#8a8a8a 0 1px,#000 1px 5px,#8a8a8a 5px 6px)"></div>
<div class="abs" style="left:1616px;top:797px;width:6px;height:1px;background:linear-gradient(to right,#8a8a8a 0 1px,#000 1px 5px,#8a8a8a 5px 6px)"></div>
<div class="abs" style="left:1710px;top:797px;width:6px;height:1px;background:linear-gradient(to right,#8a8a8a 0 1px,#000 1px 5px,#8a8a8a 5px 6px)"></div>
<div class="abs" style="left:1804px;top:797px;width:6px;height:1px;background:linear-gradient(to right,#8a8a8a 0 1px,#000 1px 5px,#8a8a8a 5px 6px)"></div>
<div class="abs" style="left:1898px;top:797px;width:6px;height:1px;background:linear-gradient(to right,#8a8a8a 0 1px,#000 1px 5px,#8a8a8a 5px 6px)"></div>
<div class="abs" style="left:864px;top:819px;width:6px;height:1px;background:linear-gradient(to right,#8a8a8a 0 1px,#000 1px 5px,#8a8a8a 5px 6px)"></div>
<div class="abs" style="left:958px;top:819px;width:6px;height:1px;background:linear-gradient(to right,#8a8a8a 0 1px,#000 1px 5px,#8a8a8a 5px 6px)"></div>
<div class="abs" style="left:1052px;top:819px;width:6px;height:1px;background:linear-gradient(to right,#8a8a8a 0 1px,#000 1px 5px,#8a8a8a 5px 6px)"></div>
<div class="abs" style="left:1146px;top:819px;width:6px;height:1px;background:linear-gradient(to right,#8a8a8a 0 1px,#000 1px 5px,#8a8a8a 5px 6px)"></div>
<div class="abs" style="left:1240px;top:819px;width:6px;height:1px;background:linear-gradient(to right,#8a8a8a 0 1px,#000 1px 5px,#8a8a8a 5px 6px)"></div>
<div class="abs" style="left:1334px;top:819px;width:6px;height:1px;background:linear-gradient(to right,#8a8a8a 0 1px,#000 1px 5px,#8a8a8a 5px 6px)"></div>
<div class="abs" style="left:1428px;top:819px;width:6px;height:1px;background:linear-gradient(to right,#8a8a8a 0 1px,#000 1px 5px,#8a8a8a 5px 6px)"></div>
<div class="abs" style="left:1522px;top:819px;width:6px;height:1px;background:linear-gradient(to right,#8a8a8a 0 1px,#000 1px 5px,#8a8a8a 5px 6px)"></div>
<div class="abs" style="left:1616px;top:819px;width:6px;height:1px;background:linear-gradient(to right,#8a8a8a 0 1px,#000 1px 5px,#8a8a8a 5px 6px)"></div>
<div class="abs" style="left:1710px;top:819px;width:6px;height:1px;background:linear-gradient(to right,#8a8a8a 0 1px,#000 1px 5px,#8a8a8a 5px 6px)"></div>
<div class="abs" style="left:1804px;top:819px;width:6px;height:1px;background:linear-gradient(to right,#8a8a8a 0 1px,#000 1px 5px,#8a8a8a 5px 6px)"></div>
<div class="abs" style="left:1898px;top:819px;width:6px;height:1px;background:linear-gradient(to right,#8a8a8a 0 1px,#000 1px 5px,#8a8a8a 5px 6px)"></div>
<div class="abs" style="left:864px;top:841px;width:6px;height:1px;background:linear-gradient(to right,#8a8a8a 0 1px,#000 1px 5px,#8a8a8a 5px 6px)"></div>
<div class="abs" style="left:958px;top:841px;width:6px;height:1px;background:linear-gradient(to right,#8a8a8a 0 1px,#000 1px 5px,#8a8a8a 5px 6px)"></div>
<div class="abs" style="left:1052px;top:841px;width:6px;height:1px;background:linear-gradient(to right,#8a8a8a 0 1px,#000 1px 5px,#8a8a8a 5px 6px)"></div>
<div class="abs" style="left:1146px;top:841px;width:6px;height:1px;background:linear-gradient(to right,#8a8a8a 0 1px,#000 1px 5px,#8a8a8a 5px 6px)"></div>
<div class="abs" style="left:1240px;top:841px;width:6px;height:1px;background:linear-gradient(to right,#8a8a8a 0 1px,#000 1px 5px,#8a8a8a 5px 6px)"></div>
<div class="abs" style="left:1334px;top:841px;width:6px;height:1px;background:linear-gradient(to right,#8a8a8a 0 1px,#000 1px 5px,#8a8a8a 5px 6px)"></div>
<div class="abs" style="left:1428px;top:841px;width:6px;height:1px;background:linear-gradient(to right,#8a8a8a 0 1px,#000 1px 5px,#8a8a8a 5px 6px)"></div>
<div class="abs" style="left:1522px;top:841px;width:6px;height:1px;background:linear-gradient(to right,#8a8a8a 0 1px,#000 1px 5px,#8a8a8a 5px 6px)"></div>
<div class="abs" style="left:1616px;top:841px;width:6px;height:1px;background:linear-gradient(to right,#8a8a8a 0 1px,#000 1px 5px,#8a8a8a 5px 6px)"></div>
<div class="abs" style="left:1710px;top:841px;width:6px;height:1px;background:linear-gradient(to right,#8a8a8a 0 1px,#000 1px 5px,#8a8a8a 5px 6px)"></div>
<div class="abs" style="left:1804px;top:841px;width:6px;height:1px;background:linear-gradient(to right,#8a8a8a 0 1px,#000 1px 5px,#8a8a8a 5px 6px)"></div>
<div class="abs" style="left:1898px;top:841px;width:6px;height:1px;background:linear-gradient(to right,#8a8a8a 0 1px,#000 1px 5px,#8a8a8a 5px 6px)"></div>

<!-- tab bar -->
<div class="abs" style="left:0;top:862px;width:1889px;height:29px;background:#f5f5f5"></div>
<div class="abs" style="left:0;top:862px;width:1889px;height:1px;background:#ababab"></div>
<div class="tsep" style="left:101px"></div>
<div class="abs" style="left:104px;top:865px;width:95px;height:23px;background:#2e75b6"></div>
<div class="tab" style="left:104px;width:95px;text-align:center;color:#fff;letter-spacing:0.9px">Valuation</div>
<div class="tsep" style="left:201px"></div>
<div class="abs" style="left:204px;top:865px;width:106px;height:23px;background:#2e75b6"></div>
<div class="tab" style="left:204px;width:106px;text-align:center;color:#fff;letter-spacing:0.6px">Dashboard</div>
<div class="tsep" style="left:312px"></div>
<div class="tab" style="left:328px;letter-spacing:0.75px">Income Statement</div>
<div class="tsep" style="left:488px"></div>
<div class="tab" style="left:504px;letter-spacing:0.42px">Cash Flow Statement</div>
<div class="tsep" style="left:681px"></div>
<div class="tab" style="left:695px;letter-spacing:0.33px">Balance Sheet</div>
<div class="tsep" style="left:816px"></div>
<div class="tab" style="left:830px;letter-spacing:0.57px">Cost Details</div>
<div class="tsep" style="left:935px"></div>
<div class="tab" style="left:948px;letter-spacing:0.18px">KPI's</div>
<div class="tsep" style="left:997px"></div>
<div class="tab" style="left:1015px;letter-spacing:0.33px">Sensitivity Analysis</div>
<div class="abs" style="left:1173px;top:862px;width:80px;height:26px;background:#fff;border-left:1px solid #ababab;border-right:1px solid #ababab"></div>
<div class="abs" style="left:1173px;top:886px;width:80px;height:2px;background:#217346"></div>
<div class="tab" style="left:1173px;width:80px;text-align:center;color:#217346;font-weight:bold;letter-spacing:0.25px">Payroll</div>
<div class="tab" style="left:1271px;width:27px;overflow:hidden;letter-spacing:0.6px">Dep</div>
<!-- horizontal scrollbar -->
<div class="abs" style="left:1387px;top:867px;width:502px;height:19px;background:#e8e8e8"></div>
<div class="abs" style="left:1387px;top:867px;width:19px;height:19px;background:#fff;border:1px solid #c6c6c6"></div>
<div class="abs" style="left:1406px;top:867px;width:101px;height:19px;background:#fff;border:1px solid #a6a6a6"></div>
<div class="abs" style="left:1872px;top:867px;width:20px;height:19px;background:#fff;border:1px solid #c4c4c4"></div>
<svg class="abs" style="left:0;top:0" width="1889" height="891" viewBox="0 0 1889 891">
<path d="M31.2 871.8 L25.8 876.4 L31.2 881 Z" fill="#0e5c2f"/>
<path d="M55 871.8 L60.4 876.4 L55 881 Z" fill="#0e5c2f"/>
<rect x="80" y="877" width="2.6" height="2.4" fill="#0e5c2f"/>
<rect x="85" y="877" width="2.6" height="2.4" fill="#0e5c2f"/>
<rect x="90" y="877" width="2.6" height="2.4" fill="#0e5c2f"/>
<rect x="1306" y="876.7" width="2.6" height="2.4" fill="#0e5c2f"/>
<rect x="1311" y="876.7" width="2.6" height="2.4" fill="#0e5c2f"/>
<rect x="1316" y="876.7" width="2.6" height="2.4" fill="#0e5c2f"/>
<circle cx="1340.9" cy="876.8" r="9.6" fill="none" stroke="#6e6e6e" stroke-width="1.4"/>
<path d="M1340.9 872 V881.8 M1336 876.8 H1345.8" stroke="#606060" stroke-width="2"/>
<rect x="1369" y="872" width="2.2" height="2.2" fill="#ababab"/>
<rect x="1369" y="876" width="2.2" height="2.2" fill="#ababab"/>
<rect x="1369" y="880" width="2.2" height="2.2" fill="#ababab"/>
<path d="M1398 871.9 L1393 876.5 L1398 881.1 Z" fill="#777"/>
<path d="M1879 872 L1884 876.5 L1879 881 Z" fill="#777"/>
</svg>
</div></body></html>
